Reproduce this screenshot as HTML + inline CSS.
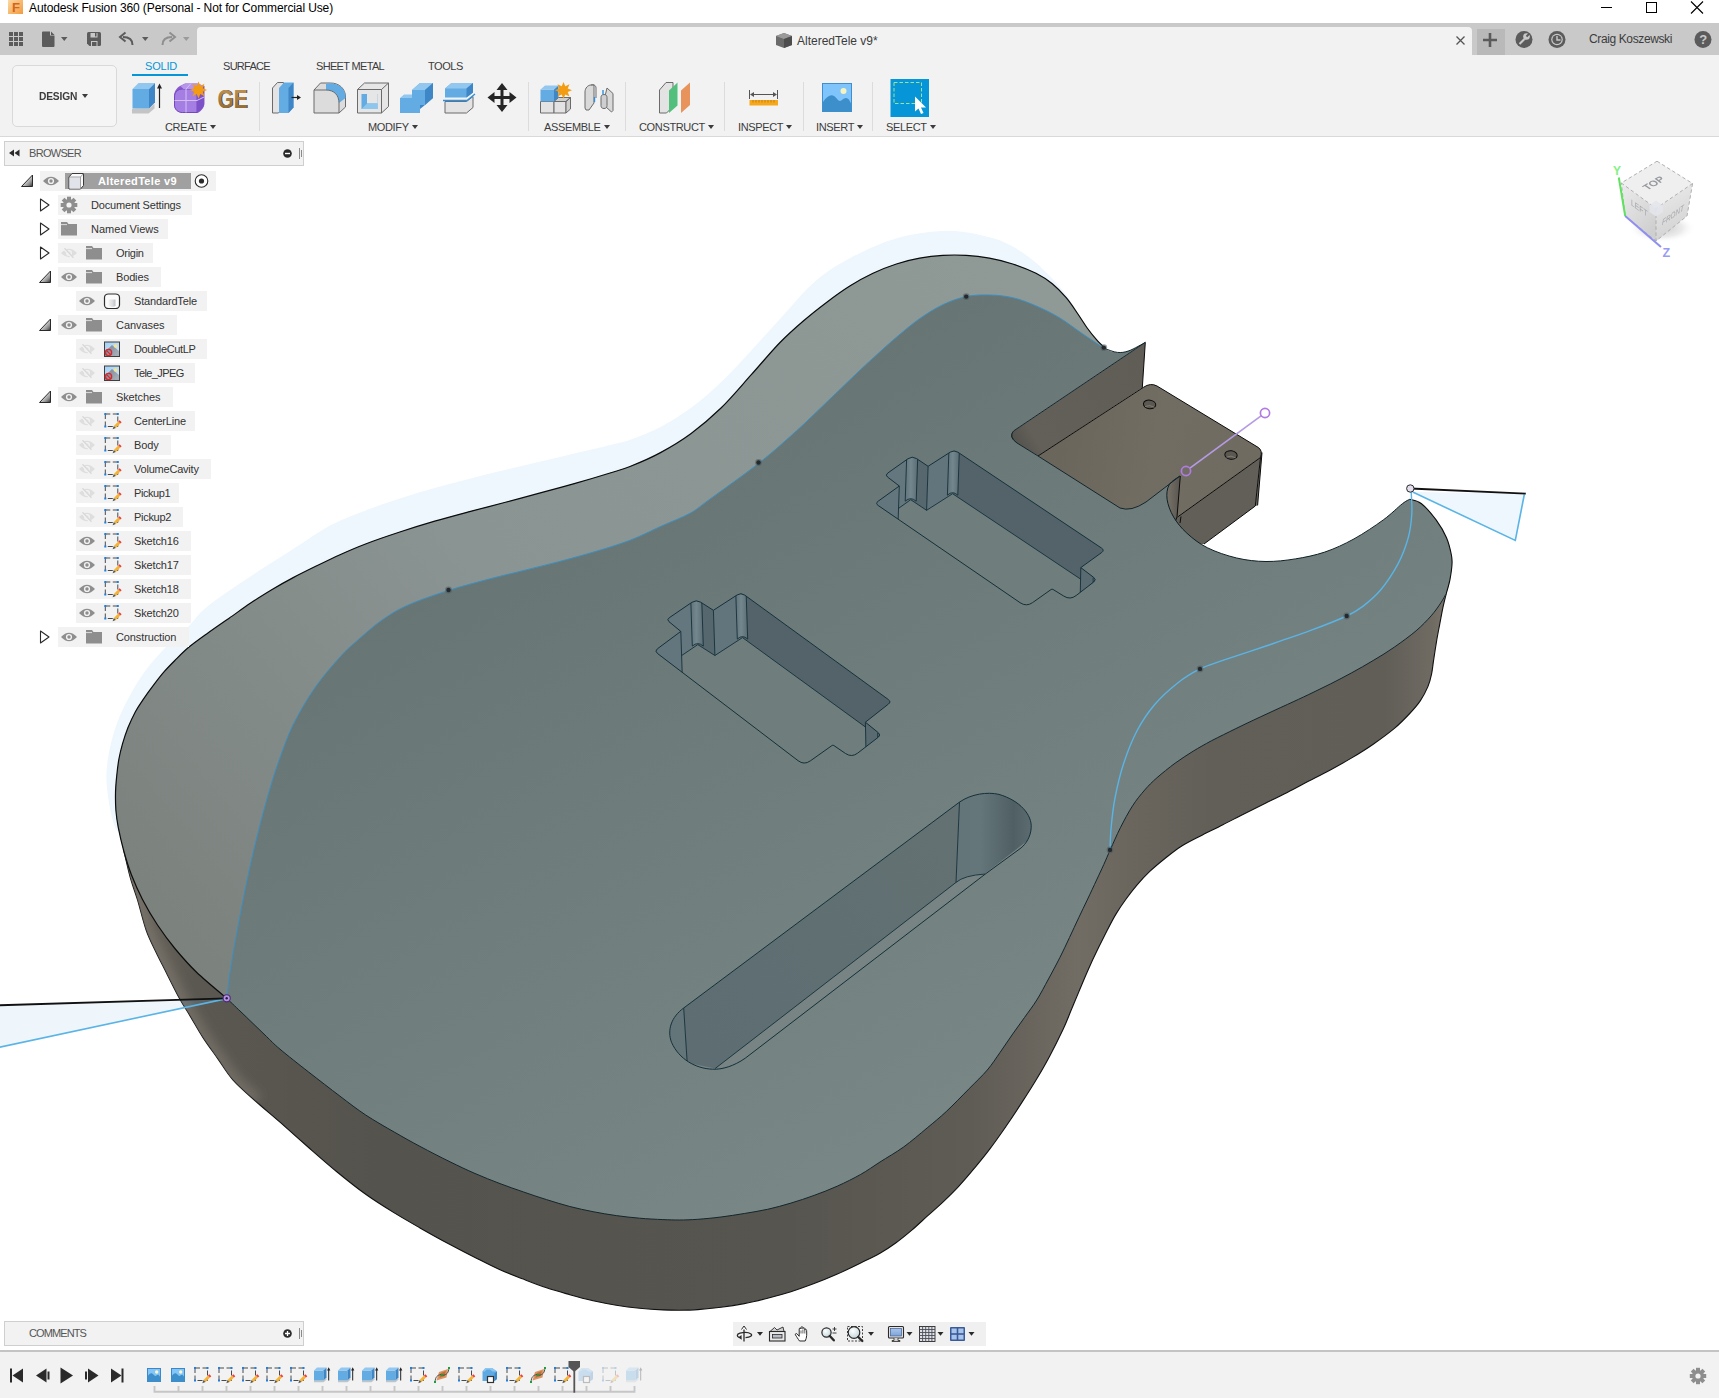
<!DOCTYPE html>
<html lang="en">
<head>
<meta charset="utf-8">
<title>Autodesk Fusion 360 (Personal - Not for Commercial Use)</title>
<style>
*{box-sizing:border-box;margin:0;padding:0}
html,body{width:1719px;height:1398px;overflow:hidden;background:#fff}
body{font-family:"Liberation Sans",Arial,sans-serif;font-size:11px;color:#3c3c3c;position:relative}
.abs{position:absolute}
#titlebar{position:absolute;left:0;top:0;width:1719px;height:23px;background:#fff}
#titlebar .ttl{position:absolute;left:29px;top:0;height:16px;line-height:16px;font-size:12px;color:#000;white-space:nowrap;letter-spacing:-0.11px}
#qat{position:absolute;left:0;top:23px;width:1719px;height:32px;background:#c9c9c9}
#doctab{position:absolute;left:197px;top:27px;width:1275px;height:28px;background:#f2f2f2;border-radius:4px 4px 0 0}
#doctab .name{position:absolute;left:600px;top:0;height:28px;line-height:28px;font-size:12px;color:#3c3c3c;white-space:nowrap}
#ribbon{position:absolute;left:0;top:55px;width:1719px;height:81px;background:#f2f2f2}
#ribbonline{position:absolute;left:0;top:136px;width:1719px;height:1px;background:#d9d9d9}
.tab{position:absolute;top:59px;height:14px;line-height:14px;font-size:11px;color:#3c3c3c;white-space:nowrap;letter-spacing:-0.1px}
.grp{position:absolute;top:121px;height:13px;line-height:13px;font-size:11px;color:#3c3c3c;white-space:nowrap;letter-spacing:-0.35px}
.grp i{display:inline-block;width:0;height:0;border-left:3px solid transparent;border-right:3px solid transparent;border-top:4px solid #3c3c3c;margin-left:3px;vertical-align:2px}
.sep{position:absolute;top:82px;width:1px;height:49px;background:#dcdcdc}
#viewport{position:absolute;left:0;top:137px;width:1719px;height:1213px;background:#fff;overflow:hidden}
.panelhdr{position:absolute;left:4px;width:300px;height:25px;background:#f2f2f2;border:1px solid #cfcfcf;font-size:11.5px;color:#555;line-height:23px;white-space:nowrap}
.row{position:absolute;height:20px;background:#f2f2f2}
.row span{position:absolute;top:0;height:20px;line-height:20px;font-size:11px;color:#333;white-space:nowrap}
#timeline{position:absolute;left:0;top:1350px;width:1719px;height:48px;background:#f2f2f2;border-top:2px solid #c4c4c4}
#navbar{position:absolute;left:733px;top:1322px;width:253px;height:24px;background:#f0f0f0}
svg{position:absolute;overflow:visible}
</style>
</head>
<body>
<div id="titlebar"><div class="ttl">Autodesk Fusion 360 (Personal - Not for Commercial Use)</div></div>
<div id="qat"></div>
<div class="abs" style="left:1477px;top:29px;width:28px;height:26px;background:#b9b9b9"></div>
<div id="doctab"><div class="name">AlteredTele v9*</div></div>
<div id="ribbon"></div>
<div id="ribbonline"></div>
<div class="abs" style="left:12px;top:65px;width:105px;height:62px;border:1px solid #d9d9d9;border-radius:5px;background:#f5f5f5"></div>
<div class="abs" style="left:39px;top:89px;height:14px;line-height:14px;font-size:11px;font-weight:bold;color:#3c3c3c;letter-spacing:-0.2px;white-space:nowrap;transform:scaleX(0.93);transform-origin:0 0">DESIGN</div>
<div class="abs" style="left:82px;top:94px;width:0;height:0;border-left:3px solid transparent;border-right:3px solid transparent;border-top:4px solid #3c3c3c"></div>
<div class="tab" style="left:145px;color:#0696d7;letter-spacing:-0.2px">SOLID</div>
<div class="abs" style="left:132px;top:74px;width:56px;height:2px;background:#0696d7"></div>
<div class="tab" style="left:223px;letter-spacing:-0.71px">SURFACE</div>
<div class="tab" style="left:316px;letter-spacing:-0.67px">SHEET METAL</div>
<div class="tab" style="left:428px;letter-spacing:-0.42px">TOOLS</div>
<div class="grp" style="left:165px">CREATE<i></i></div>
<div class="grp" style="left:368px">MODIFY<i></i></div>
<div class="grp" style="left:544px">ASSEMBLE<i></i></div>
<div class="grp" style="left:639px">CONSTRUCT<i></i></div>
<div class="grp" style="left:738px">INSPECT<i></i></div>
<div class="grp" style="left:816px">INSERT<i></i></div>
<div class="grp" style="left:886px">SELECT<i></i></div>
<div class="sep" style="left:259px"></div>
<div class="sep" style="left:528px"></div>
<div class="sep" style="left:625px"></div>
<div class="sep" style="left:724px"></div>
<div class="sep" style="left:803px"></div>
<div class="sep" style="left:872px"></div>
<div class="abs" style="left:1589px;top:32px;height:14px;line-height:14px;font-size:12px;color:#3c3c3c;white-space:nowrap;letter-spacing:-0.38px">Craig Koszewski</div>
<svg class="abs" style="left:0;top:0" width="1719" height="137" viewBox="0 0 1719 137">
<defs>
<linearGradient id="gF" x1="0" y1="0" x2="1" y2="1"><stop offset="0" stop-color="#fbd9a6"/><stop offset="1" stop-color="#f39a3c"/></linearGradient>
<linearGradient id="gGE" x1="0" y1="0" x2="0" y2="1"><stop offset="0" stop-color="#c89a58"/><stop offset="1" stop-color="#8a6330"/></linearGradient>
</defs>
<!-- app icon -->
<rect x="8" y="0" width="15" height="14" fill="url(#gF)"/>
<text x="12" y="12" font-family="Liberation Sans,sans-serif" font-weight="bold" font-size="13" fill="#d4661a">F</text>
<!-- window controls -->
<path d="M1601 7.5h11" stroke="#000" stroke-width="1"/>
<rect x="1646.5" y="2.5" width="10" height="10" fill="none" stroke="#000" stroke-width="1"/>
<path d="M1691 1.5l12 12M1703 1.5l-12 12" stroke="#000" stroke-width="1.1"/>
<!-- QAT grid -->
<g fill="#5b5b5b">
<rect x="9" y="32" width="4" height="4"/><rect x="14" y="32" width="4" height="4"/><rect x="19" y="32" width="4" height="4"/>
<rect x="9" y="37" width="4" height="4"/><rect x="14" y="37" width="4" height="4"/><rect x="19" y="37" width="4" height="4"/>
<rect x="9" y="42" width="4" height="4"/><rect x="14" y="42" width="4" height="4"/><rect x="19" y="42" width="4" height="4"/>
<!-- file -->
<path d="M42 32.5a1 1 0 0 1 1-1h7v4h4.5v10.5a1 1 0 0 1-1 1h-10.5a1 1 0 0 1-1-1z"/><path d="M51 31.5l3.5 3.5h-3.5z"/>
<path d="M61 37h6.5l-3.25 4z"/>
<!-- save -->
<path d="M87 33.5a1.5 1.5 0 0 1 1.5-1.5h11a1.5 1.5 0 0 1 1.5 1.5v11a1.5 1.5 0 0 1-1.5 1.5h-10l-2.500-2.5z"/>
</g>
<rect x="90.500" y="33" width="7" height="4.500" fill="#c9c9c9"/><rect x="91" y="41" width="6.500" height="5" fill="#c9c9c9"/><rect x="92" y="42" width="4.500" height="4" fill="#5b5b5b"/>
<rect x="95" y="33" width="1.5" height="3.500" fill="#5b5b5b"/>
<!-- undo -->
<path d="M132.500 45c0-5-3-8-9.500-8" fill="none" stroke="#5b5b5b" stroke-width="2"/><path d="M125.500 32.500l-5.500 4.500 5.500 4.500" fill="none" stroke="#5b5b5b" stroke-width="2" stroke-linejoin="miter"/>
<path d="M142 37h6.500l-3.250 4z" fill="#5b5b5b"/>
<!-- redo -->
<path d="M162.500 45c0-5 3-8 9.500-8" fill="none" stroke="#8f8f8f" stroke-width="2"/><path d="M169.500 32.500l5.500 4.500-5.500 4.500" fill="none" stroke="#8f8f8f" stroke-width="2"/>
<path d="M183 37h6.500l-3.250 4z" fill="#9a9a9a"/>
<!-- doc tab icon -->
<path d="M776 36l8-3 8 3v9l-8 3-8-3z" fill="#6b6b6b"/><path d="M776 36l8 3 8-3-8-3z" fill="#9a9a9a"/><path d="M784 39v9l8-3v-9z" fill="#4d4d4d"/>
<!-- tab close -->
<path d="M1456.500 36.500l8 8M1464.500 36.500l-8 8" stroke="#555" stroke-width="1.300"/>
<!-- plus -->
<path d="M1483 40h14M1490 33v14" stroke="#5b5b5b" stroke-width="2.600"/>
<!-- job status -->
<circle cx="1524" cy="39.500" r="8.500" fill="#5b5b5b"/><path d="M1519.500 44l5-5" stroke="#c9c9c9" stroke-width="2.200"/><circle cx="1526.500" cy="36.500" r="3.300" fill="#c9c9c9"/><path d="M1526.500 36.500l3-3" stroke="#5b5b5b" stroke-width="2"/>
<!-- clock -->
<circle cx="1557" cy="39.500" r="8.500" fill="#5b5b5b"/><circle cx="1557" cy="39.500" r="5.800" fill="#c9c9c9"/><circle cx="1557" cy="39.500" r="4.600" fill="#5b5b5b"/><path d="M1557 36v4h3.500" stroke="#c9c9c9" stroke-width="1.400" fill="none"/>
<!-- help -->
<circle cx="1703" cy="39.500" r="8.500" fill="#5b5b5b"/><text x="1699.300" y="44.300" font-family="Liberation Sans,sans-serif" font-weight="bold" font-size="13" fill="#c9c9c9">?</text>

<!-- ===== ribbon icons ===== -->
<!-- extrude -->
<path d="M132 109l16.500 0 6-5v4.500l-6 5h-16.500z" fill="#c4c4c4"/><path d="M132 109h16.500l6-5h-3l-3 2z" fill="#dedede"/>
<path d="M132.500 89h16.500v19.500h-16.500z" fill="#62abe3"/><path d="M132.500 89l6-6h16.500l-6 6z" fill="#92c8ef"/><path d="M149 89l6-6v19.500l-6 6z" fill="#3e86c6"/>
<path d="M159.500 87v21" stroke="#222" stroke-width="1.200"/><path d="M157 88.500l2.500-5 2.500 5z" fill="#222"/>
<!-- form -->
<path d="M174 96.500c0-5 2.500-8.500 6-10.500l5-2.500h12l7.500 2.500v17c0 4-3 8-7 10h-14c-5.500 0-9.500-3.500-9.500-9z" fill="#8a5ad0"/>
<path d="M174.500 97c0-5 3.500-8 8-8h14.500v23.500h-14.500c-4.500 0-8-3-8-7.500z" fill="#a57ee4" stroke="#7648c0" stroke-width="1"/>
<path d="M197 89l7-3v17.500c0 4-3 7-7 9z" fill="#7d52c8"/>
<path d="M180.500 86l5-2.500h12l6.500 2.500-7 3h-13.500z" fill="#b695ea"/>
<path d="M186 89v23.500M174.500 100.500h22.500M197 100.500l7-3.500M186 89l5-5.500" stroke="#d4bff5" stroke-width="1" fill="none"/>
<path d="M198.500 81.500l1.800 4.400 4.200-2.100-1.800 4.400 4.400 1.800-4.400 1.800 1.800 4.400-4.200-2.100-1.800 4.400-1.800-4.400-4.200 2.100 1.800-4.400-4.400-1.800 4.400-1.800-1.800-4.400 4.200 2.100z" fill="#f39c12"/>
<!-- GE -->
<text x="218.300" y="108.300" font-family="Liberation Sans,sans-serif" font-weight="bold" font-size="25" textLength="30" lengthAdjust="spacingAndGlyphs" fill="#3b3428">GE</text>
<text x="217.500" y="107.500" font-family="Liberation Sans,sans-serif" font-weight="bold" font-size="25" textLength="30" lengthAdjust="spacingAndGlyphs" fill="url(#gGE)">GE</text>
<!-- press pull -->
<path d="M272.500 88l5-5.500h6v25l-5 5.500h-6z" fill="#e3e3e3" stroke="#6b6b6b" stroke-width="1"/>
<path d="M279 88l5-5.500h9.500v25l-5 5.500h-9.500z" fill="#62abe3"/><path d="M288.500 88l5-5.500v25l-5 5.500z" fill="#3e86c6"/>
<path d="M291.500 97.500h7" stroke="#222" stroke-width="1.200"/><path d="M297 95l4 2.500-4 2.500z" fill="#222"/>
<!-- fillet -->
<path d="M314 90l6.500-7h10c9 0 15 6 15 14v10l-6.500 6h-25z" fill="#dcdcdc" stroke="#6b6b6b" stroke-width="1"/>
<path d="M326 84c6-2 13 0 17 5 2 3 2.500 6 2.500 9l-6.500 5c0-8-5-13-13-13z" fill="#62abe3"/>
<path d="M314 90h12c8 0 13 5 13 13v10" fill="none" stroke="#6b6b6b" stroke-width="1"/>
<!-- shell -->
<path d="M357.500 89.500l7-6.500h24v23.500l-7 6.500h-24z" fill="#e6e6e6" stroke="#6b6b6b" stroke-width="1"/>
<path d="M357.500 89.500h24v23.500M381.500 89.500l7-6.500" fill="none" stroke="#6b6b6b" stroke-width="1"/>
<path d="M361.500 94h16v15h-16z" fill="#62abe3"/><path d="M367 94h10.500v9.500h-10.500z" fill="#e6e6e6"/><path d="M361.500 109l5.500-5.500h10.500v5.500z" fill="#8ec6ee"/>
<!-- combine -->
<path d="M400 98h12v-8l8-7h13v15l-8 7h-5v8l-8 0h-12z" fill="#62abe3"/>
<path d="M412 90l8-7h13l-8 7z" fill="#92c8ef"/><path d="M425 90l8-7v15l-8 7z" fill="#3e86c6"/><path d="M400 98l4-3.500h8v3.500z" fill="#92c8ef"/><path d="M420 105h5l-5 4z" fill="#3e86c6"/>
<!-- offset face -->
<path d="M445 101.500h21.500l6.500-5v11l-6.500 5.500h-21.500z" fill="#e3e3e3" stroke="#6b6b6b" stroke-width="1"/>
<path d="M445 88.500l6.500-5.500h21.500v9.500l-6.500 5h-21.500z" fill="#62abe3"/><path d="M445 88.500l6.500-5.500h21.500l-6.500 5.500z" fill="#92c8ef"/><path d="M466.500 88.500l6.500-5.500v9.500l-6.500 5z" fill="#3e86c6"/>
<path d="M443 100.500h24l8-6.500" fill="none" stroke="#2f8fde" stroke-width="1.300"/>
<!-- move -->
<path d="M502 83l5.500 7h-4v6h6v-4l7 5.500-7 5.500v-4h-6v6h4l-5.500 7-5.500-7h4v-6h-6v4l-7-5.500 7-5.500v4h6v-6h-4z" fill="#262626"/>
<!-- new component -->
<path d="M540.500 101.500h13.500v11.500h-13.500z" fill="#e3e3e3" stroke="#6b6b6b" stroke-width="1"/><path d="M554 101.500h12v11.500h-12z" fill="#e3e3e3" stroke="#6b6b6b" stroke-width="1"/><path d="M554 101.500l4.500-4h12l-4.500 4zM566 101.500l4.500-4v11.500l-4.500 4z" fill="#cfcfcf" stroke="#6b6b6b" stroke-width="1"/>
<path d="M540.500 89.500h13.500v12h-13.500z" fill="#62abe3"/><path d="M540.500 89.500l4.500-4h13.500l-4.500 4z" fill="#92c8ef"/><path d="M554 89.500l4.500-4v12l-4.500 4z" fill="#3e86c6"/>
<path d="M563.500 82l1.800 4.200 4.200-2-1.800 4.300 4.300 1.800-4.300 1.800 1.800 4.300-4.200-2-1.800 4.300-1.800-4.300-4.200 2 1.800-4.300-4.300-1.800 4.300-1.800-1.800-4.300 4.200 2z" fill="#f39c12"/>
<!-- joint -->
<path d="M585 92c0-4 3-7 6-7h3v18l-5 7h-3l-1-2z" fill="#d9d9d9" stroke="#6b6b6b" stroke-width="1"/>
<path d="M591 85c2-1 5 0 5 3v10" fill="none" stroke="#6b6b6b" stroke-width="1"/>
<path d="M607 88l6 5.500v17l-1.500 1.500-6-5.500h-3z" fill="#d9d9d9" stroke="#6b6b6b" stroke-width="1"/>
<path d="M601 97.500c0-2 1-3 3-3s3 1 3 3v8c0 2-1 3-3 3s-3-1-3-3z" fill="#cfcfcf" stroke="#6b6b6b" stroke-width="1"/>
<path d="M594.500 97v5M603 90v4.500" stroke="#2f8fde" stroke-width="1.400"/>
<!-- construct -->
<path d="M659.500 90l6.500-7.500h7v24l-6.500 6.500h-7z" fill="#e3e3e3" stroke="#6b6b6b" stroke-width="1"/>
<path d="M669 90.500l8.500-8v23l-8.500 7.500z" fill="#52c07c"/>
<path d="M681 90.500l9-8v22.500l-9 8z" fill="#e7935b"/>
<!-- inspect -->
<path d="M749.500 90v9M777.500 90v9M751 94.500h25" stroke="#555" stroke-width="1"/><path d="M750 94.500l4-2.500v5zM777 94.500l-4-2.500v5z" fill="#555"/>
<rect x="749.500" y="100" width="28.500" height="5.500" fill="#f6a81c"/><path d="M753 100v2.500M756 100v2.500M759 100v2.500M762 100v2.500M765 100v2.500M768 100v2.500M771 100v2.500M774 100v2.500" stroke="#c47f0a" stroke-width="1"/>
<!-- insert -->
<rect x="822.500" y="83.500" width="29" height="28" fill="#7fc4fb" stroke="#3f8fd0" stroke-width="1"/>
<path d="M823 102c4-6 8-8 11-6s4 5 6 5 3-3 6-3 4 4 5.500 6v7.500h-28.500z" fill="#3d8fcb"/><circle cx="843.500" cy="91" r="3" fill="#f7f3c0"/>
<!-- select -->
<rect x="890.500" y="79" width="38.500" height="38" fill="#0696d7"/>
<rect x="894" y="82.500" width="27.500" height="21" fill="none" stroke="#9be39b" stroke-width="1" stroke-dasharray="3.500 2"/>
<path d="M915 96.500v15l3.500-3 2.500 5.500 2.500-1-2.500-5.500h5z" fill="#fff"/>
</svg>
<div id="viewport">
<svg style="left:0;top:-137px" width="1719" height="1398" viewBox="0 0 1719 1398">
<defs>
<linearGradient id="gTop" gradientUnits="userSpaceOnUse" x1="600" y1="300" x2="1077" y2="1179"><stop offset="0" stop-color="#637170"/><stop offset="1" stop-color="#7b8988"/></linearGradient>
<linearGradient id="gBand" gradientUnits="userSpaceOnUse" x1="1000" y1="250" x2="150" y2="950"><stop offset="0" stop-color="#8f9996"/><stop offset="0.55" stop-color="#8a9492"/><stop offset="1" stop-color="#7b817d"/></linearGradient>
<linearGradient id="gSide" gradientUnits="userSpaceOnUse" x1="115" y1="0" x2="1452" y2="0">
<stop offset="0" stop-color="#6b675f"/><stop offset="0.06" stop-color="#5b5851"/><stop offset="0.2" stop-color="#55534d"/><stop offset="0.5" stop-color="#57554f"/><stop offset="0.64" stop-color="#5f5c55"/><stop offset="0.72" stop-color="#716c64"/><stop offset="0.76" stop-color="#6a665e"/><stop offset="0.82" stop-color="#625f58"/><stop offset="0.95" stop-color="#615e57"/><stop offset="0.985" stop-color="#6f6b63"/><stop offset="1" stop-color="#7d786f"/></linearGradient>
<linearGradient id="gFloor" gradientUnits="userSpaceOnUse" x1="1060" y1="440" x2="1250" y2="470"><stop offset="0" stop-color="#6a665c"/><stop offset="0.5" stop-color="#726d63"/><stop offset="1" stop-color="#6f6b61"/></linearGradient>
<linearGradient id="gWall" gradientUnits="userSpaceOnUse" x1="1015" y1="440" x2="1145" y2="360"><stop offset="0" stop-color="#55534d"/><stop offset="0.12" stop-color="#63605a"/><stop offset="1" stop-color="#605d57"/></linearGradient>
<linearGradient id="gCut" gradientUnits="userSpaceOnUse" x1="1166" y1="0" x2="1181" y2="0"><stop offset="0" stop-color="#7a756b"/><stop offset="1" stop-color="#57544e"/></linearGradient>
<linearGradient id="gFil" x1="0" y1="0" x2="1" y2="0"><stop offset="0" stop-color="#62747b"/><stop offset="0.45" stop-color="#73878e"/><stop offset="1" stop-color="#5c6d74"/></linearGradient>
<linearGradient id="gSlotW" gradientUnits="userSpaceOnUse" x1="690" y1="1040" x2="960" y2="840"><stop offset="0" stop-color="#5d6d72"/><stop offset="1" stop-color="#637172"/></linearGradient>
<linearGradient id="gSlotR" gradientUnits="userSpaceOnUse" x1="958" y1="0" x2="1032" y2="0"><stop offset="0" stop-color="#64757a"/><stop offset="0.3" stop-color="#65767a"/><stop offset="0.75" stop-color="#4f5f64"/><stop offset="1" stop-color="#5d6c70"/></linearGradient>
<radialGradient id="gCubeSh"><stop offset="0" stop-color="#9a9a9a" stop-opacity="0.55"/><stop offset="0.6" stop-color="#bdbdbd" stop-opacity="0.3"/><stop offset="1" stop-color="#ffffff" stop-opacity="0"/></radialGradient>
<linearGradient id="gCubeL" x1="0" y1="0" x2="0.6" y2="1"><stop offset="0" stop-color="#ececec"/><stop offset="1" stop-color="#cfcfcf"/></linearGradient>
<linearGradient id="gCubeR" x1="0" y1="0" x2="0.3" y2="1"><stop offset="0" stop-color="#ededed"/><stop offset="1" stop-color="#d2d2d2"/></linearGradient>
<filter id="fBlur" x="-20%" y="-20%" width="140%" height="140%"><feGaussianBlur stdDeviation="5"/></filter>
</defs>
<path d="M1096 340C1093.8 336.8 1086.3 326.9 1082.5 321C1078.7 315.1 1076.9 310.5 1073 304.7C1069.1 298.9 1065.2 293 1059 286C1052.8 279 1043.7 269.4 1036 262.8C1028.3 256.2 1020.5 250.8 1012.7 246.5C1004.9 242.2 1000.3 239.8 989.4 237.2C978.5 234.6 963.1 230.5 947.5 230.7C931.9 230.9 912.3 233.8 896 238.4C879.7 243 863.3 251 849.8 258.2C836.3 265.4 826.4 271.6 815 281.4C803.6 291.2 792.1 305.7 781.5 317.2C770.9 328.7 761.4 339.6 751.3 350.5C741.2 361.4 731.1 372.7 721 382.3C710.9 391.9 700.9 400.6 690.8 408C680.7 415.4 670.6 421.6 660.5 426.9C650.4 432.2 638.8 436.6 630.3 439.7C621.8 442.8 618.5 442.9 609.2 445.2C599.9 447.5 585.9 450.8 574.3 453.6C562.7 456.4 551 459.1 539.4 461.8C527.8 464.5 516.1 467.2 504.5 470C492.9 472.8 481.2 475.7 469.6 478.7C458 481.7 446.3 484.7 434.7 488C423.1 491.3 411.4 494.7 399.8 498.5C388.2 502.3 376.5 506.2 364.9 510.7C353.3 515.2 341.9 519.1 330 525.5C318.1 531.9 306.5 540.5 293.2 549C279.9 557.5 264.6 566.9 250.3 576.5C236 586.1 217.5 598.4 207.3 606.6C197.1 614.8 196.2 618.9 189.1 625.9C181.9 632.9 172.1 640.3 164.4 648.4C156.7 656.5 149.3 665.1 142.9 674.2C136.5 683.3 130.4 694.1 125.8 703.2C121.1 712.3 117.9 720.3 115 728.9C112.1 737.5 110 746.8 108.6 754.7C107.2 762.6 106.5 769 106.4 776.1C106.3 783.2 107.3 790.8 108.2 797.6C109.1 804.4 110.5 811.5 111.8 816.9C113.1 822.3 115.4 827.6 116.1 829.8L170 880L300 700L700 500L1000 330Z" fill="#eef7fd"/>
<path d="M226.700 998.300L-2 1005.300L-2 1047.500Z" fill="#eef6fc"/>
<path d="M123.5 849C124.6 853.6 127.7 868.1 130 876.6C132.3 885.1 134.9 891.2 137.6 900.2C140.3 909.2 143.2 921.7 146.2 930.3C149.2 938.9 152.4 944.6 155.8 951.7C159.2 958.9 162.7 965.4 166.6 973.2C170.5 981 175.5 991.1 179.4 998.3C183.3 1005.4 186.3 1009.6 190.2 1016.1C194.1 1022.6 198.3 1030.4 203 1037.6C207.7 1044.8 213.1 1052 218.1 1059.1C223.1 1066.2 226.8 1073 233.1 1080.1C239.4 1087.2 248.2 1094.5 256 1101.5C263.8 1108.5 271.2 1114.5 280 1122.2C288.8 1129.9 299.1 1139.2 308.6 1147.5C318.1 1155.8 327.6 1164.2 337.1 1172C346.6 1179.8 356.2 1187.5 365.7 1194.3C375.2 1201.1 385.2 1207.3 394.3 1212.9C403.4 1218.5 410.7 1222.6 420 1227.9C429.3 1233.2 440.8 1239.6 450 1244.5C459.2 1249.4 466.7 1253.3 475 1257.5C483.3 1261.7 491.9 1266.2 500 1269.8C508.1 1273.4 515.5 1276.1 523.3 1279.1C531 1282.1 538.8 1285.2 546.5 1287.8C554.2 1290.4 562 1292.5 569.8 1294.7C577.6 1296.9 585.4 1299 593.1 1300.8C600.9 1302.5 608.5 1304 616.3 1305.2C624 1306.4 631.8 1307.4 639.6 1308.2C647.4 1309 656.3 1309.6 662.9 1309.9C669.5 1310.2 673.4 1310.3 679.2 1310.3C685 1310.2 690.8 1310.1 697.8 1309.6C704.8 1309.1 713.2 1308.3 721 1307.3C728.8 1306.3 736.5 1305.1 744.3 1303.6C752.1 1302.1 759.8 1300.2 767.6 1298.2C775.4 1296.2 783.1 1294.1 790.9 1291.7C798.6 1289.3 806.4 1286.5 814.1 1283.6C821.9 1280.6 829.6 1277.4 837.4 1274C845.2 1270.6 853.6 1266.5 860.7 1263C867.8 1259.5 874.2 1256.5 880 1253.2C885.8 1249.9 890.5 1246.8 895.7 1243C901 1239.2 906.2 1234.9 911.5 1230.4C916.8 1225.9 922 1220.9 927.2 1216.2C932.4 1211.5 937.6 1207.1 942.9 1202.1C948.1 1197.1 953.5 1191.9 958.7 1186.3C964 1180.7 969.2 1174.5 974.4 1168.2C979.6 1161.9 984.9 1155.5 990.1 1148.6C995.4 1141.6 1000.6 1134.1 1005.9 1126.5C1011.1 1118.9 1016.4 1111 1021.6 1102.9C1026.9 1094.8 1032.7 1085.7 1037.4 1077.8C1042.1 1069.9 1045.7 1063.7 1049.9 1055.7C1054.2 1047.7 1059.4 1037.2 1062.9 1029.8C1066.4 1022.3 1068.2 1017.3 1070.8 1011C1073.4 1004.7 1075.8 998.9 1078.7 992.1C1081.6 985.3 1084.9 977.1 1088.1 970C1091.2 962.9 1094.4 956.1 1097.6 949.6C1100.8 943.1 1103.9 936.7 1107 930.7C1110.1 924.7 1113.2 918.6 1116.4 913.4C1119.6 908.1 1122.5 903.9 1125.9 899.2C1129.3 894.5 1133 889.7 1136.9 885.1C1140.8 880.5 1144.8 876.2 1149.5 871.7C1154.2 867.2 1160 862.5 1165.2 858.3C1170.5 854.1 1175.2 850.2 1181 846.5C1186.8 842.8 1193 839.8 1200 836.2C1207 832.6 1215.5 828.5 1222.9 824.7C1230.3 821 1237.2 817.3 1244.4 813.7C1251.6 810.1 1258.8 806.5 1265.9 803C1273.1 799.5 1280.2 796.1 1287.3 792.5C1294.4 788.9 1301.6 784.9 1308.8 781.1C1316 777.4 1323.1 773.9 1330.3 770C1337.5 766.1 1344.5 762.2 1351.7 757.9C1358.9 753.6 1366 749.2 1373.2 744.2C1380.4 739.2 1388.6 733.2 1394.7 728.1C1400.8 723 1405.4 718.1 1409.7 713.5C1414 708.9 1417.4 705.1 1420.4 700.6C1423.4 696.1 1426 691.1 1427.9 686.6C1429.8 682.1 1430.7 678.1 1431.6 673.8C1432.5 669.5 1432.7 666.3 1433.5 660.9C1434.3 655.5 1435.5 647.7 1436.5 641.6C1437.5 635.5 1438.6 630.1 1439.7 624.4C1440.8 618.7 1441.9 612.4 1443 607.2C1444.1 602 1445.8 595.5 1446.4 593.2L1380 600L1100 800L700 1150L300 1000L150 850Z" fill="url(#gSide)" stroke="#111" stroke-width="1.1" stroke-linejoin="round"/>
<clipPath id="cSide"><path d="M123.5 849C124.6 853.6 127.7 868.1 130 876.6C132.3 885.1 134.9 891.2 137.6 900.2C140.3 909.2 143.2 921.7 146.2 930.3C149.2 938.9 152.4 944.6 155.8 951.7C159.2 958.9 162.7 965.4 166.6 973.2C170.5 981 175.5 991.1 179.4 998.3C183.3 1005.4 186.3 1009.6 190.2 1016.1C194.1 1022.6 198.3 1030.4 203 1037.6C207.7 1044.8 213.1 1052 218.1 1059.1C223.1 1066.2 226.8 1073 233.1 1080.1C239.4 1087.2 248.2 1094.5 256 1101.5C263.8 1108.5 271.2 1114.5 280 1122.2C288.8 1129.9 299.1 1139.2 308.6 1147.5C318.1 1155.8 327.6 1164.2 337.1 1172C346.6 1179.8 356.2 1187.5 365.7 1194.3C375.2 1201.1 385.2 1207.3 394.3 1212.9C403.4 1218.5 410.7 1222.6 420 1227.9C429.3 1233.2 440.8 1239.6 450 1244.5C459.2 1249.4 466.7 1253.3 475 1257.5C483.3 1261.7 491.9 1266.2 500 1269.8C508.1 1273.4 515.5 1276.1 523.3 1279.1C531 1282.1 538.8 1285.2 546.5 1287.8C554.2 1290.4 562 1292.5 569.8 1294.7C577.6 1296.9 585.4 1299 593.1 1300.8C600.9 1302.5 608.5 1304 616.3 1305.2C624 1306.4 631.8 1307.4 639.6 1308.2C647.4 1309 656.3 1309.6 662.9 1309.9C669.5 1310.2 673.4 1310.3 679.2 1310.3C685 1310.2 690.8 1310.1 697.8 1309.6C704.8 1309.1 713.2 1308.3 721 1307.3C728.8 1306.3 736.5 1305.1 744.3 1303.6C752.1 1302.1 759.8 1300.2 767.6 1298.2C775.4 1296.2 783.1 1294.1 790.9 1291.7C798.6 1289.3 806.4 1286.5 814.1 1283.6C821.9 1280.6 829.6 1277.4 837.4 1274C845.2 1270.6 853.6 1266.5 860.7 1263C867.8 1259.5 874.2 1256.5 880 1253.2C885.8 1249.9 890.5 1246.8 895.7 1243C901 1239.2 906.2 1234.9 911.5 1230.4C916.8 1225.9 922 1220.9 927.2 1216.2C932.4 1211.5 937.6 1207.1 942.9 1202.1C948.1 1197.1 953.5 1191.9 958.7 1186.3C964 1180.7 969.2 1174.5 974.4 1168.2C979.6 1161.9 984.9 1155.5 990.1 1148.6C995.4 1141.6 1000.6 1134.1 1005.9 1126.5C1011.1 1118.9 1016.4 1111 1021.6 1102.9C1026.9 1094.8 1032.7 1085.7 1037.4 1077.8C1042.1 1069.9 1045.7 1063.7 1049.9 1055.7C1054.2 1047.7 1059.4 1037.2 1062.9 1029.8C1066.4 1022.3 1068.2 1017.3 1070.8 1011C1073.4 1004.7 1075.8 998.9 1078.7 992.1C1081.6 985.3 1084.9 977.1 1088.1 970C1091.2 962.9 1094.4 956.1 1097.6 949.6C1100.8 943.1 1103.9 936.7 1107 930.7C1110.1 924.7 1113.2 918.6 1116.4 913.4C1119.6 908.1 1122.5 903.9 1125.9 899.2C1129.3 894.5 1133 889.7 1136.9 885.1C1140.8 880.5 1144.8 876.2 1149.5 871.7C1154.2 867.2 1160 862.5 1165.2 858.3C1170.5 854.1 1175.2 850.2 1181 846.5C1186.8 842.8 1193 839.8 1200 836.2C1207 832.6 1215.5 828.5 1222.9 824.7C1230.3 821 1237.2 817.3 1244.4 813.7C1251.6 810.1 1258.8 806.5 1265.9 803C1273.1 799.5 1280.2 796.1 1287.3 792.5C1294.4 788.9 1301.6 784.9 1308.8 781.1C1316 777.4 1323.1 773.9 1330.3 770C1337.5 766.1 1344.5 762.2 1351.7 757.9C1358.9 753.6 1366 749.2 1373.2 744.2C1380.4 739.2 1388.6 733.2 1394.7 728.1C1400.8 723 1405.4 718.1 1409.7 713.5C1414 708.9 1417.4 705.1 1420.4 700.6C1423.4 696.1 1426 691.1 1427.9 686.6C1429.8 682.1 1430.7 678.1 1431.6 673.8C1432.5 669.5 1432.7 666.3 1433.5 660.9C1434.3 655.5 1435.5 647.7 1436.5 641.6C1437.5 635.5 1438.6 630.1 1439.7 624.4C1440.8 618.7 1441.9 612.4 1443 607.2C1444.1 602 1445.8 595.5 1446.4 593.2L1380 600L1100 800L700 1150L300 1000L150 850Z"/></clipPath>
<g clip-path="url(#cSide)"><path d="M123.5 849C124.6 853.6 127.7 868.1 130 876.6C132.3 885.1 134.9 891.2 137.6 900.2C140.3 909.2 143.2 921.7 146.2 930.3C149.2 938.9 152.4 944.6 155.8 951.7C159.2 958.9 162.7 965.4 166.6 973.2C170.5 981 175.5 991.1 179.4 998.3C183.3 1005.4 186.3 1009.6 190.2 1016.1C194.1 1022.6 198.3 1030.4 203 1037.6C207.7 1044.8 213.1 1052 218.1 1059.1C223.1 1066.2 226.8 1073 233.1 1080.1C239.4 1087.2 252.2 1097.9 256 1101.5" fill="none" stroke="#85807680" stroke-width="16" filter="url(#fBlur)"/><path d="M226.700 998.300L150 1000.700L150 1015Z" fill="#5ab4e6" opacity="0.13"/></g>
<path d="M1038 456L1143.5 387.3Q1150.5 382.5 1157 386L1258 447.3Q1263 450.5 1260.5 457.5L1177 517L1150 520L1100 510Z" fill="url(#gFloor)"/>
<path d="M1145.3 342.4L1012.5 431.5Q1008 437 1017 443.5L1038 456L1142.3 387.8Z" fill="url(#gWall)"/>
<path d="M1012.8 431.6Q1009.5 436.5 1016.5 442.6L1016.8 446.5" fill="none" stroke="#2b2b28" stroke-width="0.8"/>
<path d="M1177 517L1260.5 457.5L1255.3 506L1204 544L1185 546L1165 527Z" fill="#625f58"/>
<path d="M1260.5 457.5L1262 452L1257.6 505.5L1255.3 506Z" fill="#6d6961"/>
<path d="M1180.3 476L1169.2 484.700L1163 492L1161 526L1175 522L1177 517Z" fill="url(#gCut)"/>
<path d="M1145.3 342.4L1142.3 387.8M1038 456L1143.5 387.3Q1150.500 382.5 1157 386L1258 447.3Q1263 450.5 1260.5 457.5L1177.500 517M1260.500 457.5L1255.3 506L1204 544M1262 452.500L1257.6 505.3M1180.3 476L1177 517L1175 522M1181 516.500L1180 523" fill="none" stroke="#0b0b0b" stroke-width="1"/>
<ellipse cx="1149.6" cy="404.4" rx="6.2" ry="4.3" transform="rotate(8 1149.6 404.4)" fill="#5b5851" stroke="#0b0b0b" stroke-width="1"/>
<path d="M1145 406.6q4.500 -2.500 9.500 0.800" fill="none" stroke="#8a857a" stroke-width="0.8"/>
<ellipse cx="1231" cy="455" rx="6.2" ry="4.3" transform="rotate(8 1231 455)" fill="#5b5851" stroke="#0b0b0b" stroke-width="1"/>
<path d="M1226.4 457.2q4.500 -2.500 9.500 0.800" fill="none" stroke="#8a857a" stroke-width="0.8"/>
<path d="M1145.3 342.4C1142.6 343.8 1133.7 349.1 1129 350.8C1124.3 352.5 1121.3 352.7 1117.4 352.4C1113.5 352.1 1109.3 351 1105.8 348.9C1102.3 346.8 1099.6 343.1 1096.5 339.6C1093.4 336.1 1090.3 332.3 1087.2 328C1084.1 323.7 1081.4 319.1 1077.9 314C1074.4 308.9 1070.5 302.7 1066.2 297.7C1061.9 292.7 1057.3 287.9 1052.3 283.8C1047.3 279.7 1042.6 276.6 1036 273.3C1029.4 270 1020.5 266.5 1012.7 264C1004.9 261.5 997.1 259.6 989.4 258.2C981.6 256.8 974 255.9 966.2 255.4C958.5 254.9 950.7 254.9 942.9 255.4C935.1 255.9 927.4 256.8 919.6 258.2C911.9 259.6 904.2 261.5 896.4 264C888.6 266.5 880.8 269.6 873 273.3C865.2 277 857.5 281.1 849.8 286C842 290.9 834.2 296.6 826.5 302.4C818.8 308.2 811 314.3 803.3 321C795.5 327.7 788.7 333.6 780 342.5C771.3 351.4 761.1 363.8 751.3 374.7C741.5 385.6 731.1 398.2 721 408C710.9 417.8 700.9 426.3 690.8 433.7C680.7 441.1 670.6 447.1 660.5 452.6C650.4 458.1 638.5 463.1 630 466.5C621.5 469.9 618.5 470.3 609.2 473.2C599.9 476.1 585.9 480.3 574.3 483.6C562.7 486.9 551 490.1 539.4 493.2C527.8 496.3 516.1 499.4 504.5 502.5C492.9 505.6 481.2 508.5 469.6 511.6C458 514.7 446.3 517.8 434.7 521.2C423.1 524.6 411.4 528.2 399.8 532C388.2 535.8 374.9 540.4 364.9 544.2C354.9 548 348.4 550.9 340 554.7C331.6 558.5 322.5 563 314.7 566.8C306.9 570.6 300.4 573.8 293.2 577.6C286 581.4 278.8 585.5 271.7 589.8C264.6 594.1 257.4 598.5 250.3 603.3C243.2 608.1 236 613.4 228.8 618.4C221.6 623.4 214 628.6 207.3 633.4C200.6 638.2 194.1 642.8 188.7 647.3C183.3 651.8 179.1 656.2 175.1 660.2C171.1 664.2 168 667.3 164.4 671.4C160.8 675.5 157.3 680.1 153.7 684.9C150.1 689.6 145.9 695.4 142.9 699.9C139.9 704.4 137.9 707.1 135.4 711.7C132.9 716.4 130.1 722.4 127.9 727.8C125.8 733.2 124 738.7 122.5 743.9C121 749.1 119.9 753.6 118.9 759C117.9 764.4 117.3 770.4 116.7 776.1C116.1 781.8 115.6 787.6 115.5 793.3C115.4 799 115.5 804.9 115.9 810.5C116.4 816.1 116.9 820.6 118.2 827.2C119.5 833.8 121.3 842 123.5 850C125.7 858 128.3 866.8 131.5 875C134.7 883.2 138.2 891.2 142.5 899.5C146.8 907.8 152 916.8 157.5 925C163 933.2 168.8 941.1 175.3 949C181.9 956.9 188.2 964.3 196.8 972.5C205.4 980.7 221.7 994 226.7 998.3C228.9 1000.4 235.6 1006.8 240 1011C244.4 1015.2 248.6 1019.2 253 1023.5C257.4 1027.8 262 1032.2 266.5 1036.5C271 1040.8 273 1043.3 280 1049.2C287 1055.1 298.6 1064.2 308.6 1072C318.6 1079.8 330.5 1089 340 1096.2C349.5 1103.4 356.6 1109 365.7 1115C374.8 1121 385.2 1126.9 394.3 1132.1C403.4 1137.3 410.7 1141.5 420 1146.4C429.3 1151.4 440.8 1157.3 450 1161.8C459.2 1166.3 466.7 1169.9 475 1173.5C483.3 1177.1 491.9 1180.5 500 1183.6C508.1 1186.7 515.5 1189.2 523.3 1191.9C531 1194.6 538.8 1197.2 546.5 1199.6C554.2 1202 562 1204.5 569.8 1206.5C577.6 1208.5 585.4 1210.2 593.1 1211.7C600.9 1213.2 608.5 1214.5 616.3 1215.6C624 1216.7 631.8 1217.5 639.6 1218.2C647.4 1218.9 656.3 1219.3 662.9 1219.6C669.5 1219.9 673.4 1220 679.2 1220C685 1220 690.8 1219.8 697.8 1219.3C704.8 1218.8 713.2 1218 721 1217C728.8 1216 736.5 1214.8 744.3 1213.5C752.1 1212.2 759.8 1211 767.6 1209.3C775.4 1207.6 783.1 1205.4 790.9 1203.1C798.6 1200.8 806.4 1198.2 814.1 1195.4C821.9 1192.6 829.6 1189.6 837.4 1186.1C845.2 1182.6 853.6 1178.4 860.7 1174.4C867.8 1170.4 872.9 1166.6 880 1162C887.1 1157.4 895.7 1152.7 903.6 1147C911.5 1141.3 920.1 1133.8 927.2 1127.9C934.3 1122 939.3 1118 946.3 1111.5C953.3 1105 962.4 1095.5 969.2 1088.6C976 1081.7 982.2 1076 987.3 1070C992.4 1064 995.9 1058.3 1000 1052.5C1004.1 1046.7 1007.9 1040.8 1012 1035C1016.1 1029.2 1020.4 1023.3 1024.5 1017.5C1028.6 1011.7 1032.8 1006.4 1036.8 1000C1040.8 993.6 1044.6 986.1 1048.5 979C1052.4 971.9 1056.5 964.2 1060 957.3C1063.5 950.4 1066.4 944.1 1069.5 937.5C1072.6 930.9 1075.7 924.2 1078.7 917.8C1081.7 911.4 1084.7 905.3 1087.7 899C1090.7 892.7 1093.9 885.8 1096.6 880C1099.3 874.2 1101.5 869.6 1103.8 864.5C1106.1 859.4 1107.6 855.6 1110.4 849.5C1113.2 843.4 1116.7 835 1120.4 827.7C1124.1 820.4 1128.5 812.1 1132.6 805.8C1136.6 799.5 1140.7 794.7 1144.7 790C1148.8 785.3 1151.8 782.3 1156.9 777.8C1162 773.3 1169 767.7 1175.1 763.2C1181.2 758.8 1187.2 754.9 1193.3 751.1C1199.4 747.4 1204.5 744.5 1211.6 740.7C1218.7 737 1227.8 732.6 1235.9 728.6C1244 724.6 1251.6 721 1260.2 717C1268.8 713 1279.2 708.2 1287.3 704.5C1295.4 700.8 1301.6 697.9 1308.8 694.5C1316 691.1 1323.1 687.6 1330.3 684C1337.5 680.4 1344.5 676.7 1351.7 672.8C1358.9 668.9 1366 664.8 1373.2 660.5C1380.4 656.2 1387.6 651.9 1394.7 646.9C1401.8 641.9 1410 636 1416.1 630.8C1422.2 625.6 1427.1 620.4 1431.2 615.8C1435.3 611.1 1438.3 606.7 1440.8 602.9C1443.3 599.1 1444.9 597.1 1446.4 593.2C1447.9 589.3 1449.1 584.1 1450 579.3C1450.9 574.5 1451.8 568.3 1452 564.3C1452.2 560.2 1452.3 559.5 1451.4 555C1450.5 550.5 1449 543.4 1446.4 537.5C1443.9 531.6 1440.2 525.5 1436.1 519.9C1431.9 514.3 1425.9 507.1 1421.5 503.7C1417.1 500.3 1411.7 500 1409.7 499.3C1408.5 500 1406.8 500.3 1402.4 503.7C1398 507.1 1391.4 514 1383.3 519.9C1375.2 525.8 1363.8 533.5 1354 538.9C1344.2 544.3 1334.5 548.8 1324.7 552.1C1314.9 555.4 1305.1 557.3 1295.3 558.9C1285.5 560.5 1275.8 561.6 1266 561.5C1256.2 561.4 1246.5 560.3 1236.7 558C1226.9 555.7 1215.6 551.9 1207.3 547.7C1199 543.6 1192.4 538.2 1186.8 533.1C1181.2 528 1176.9 522.6 1173.6 517C1170.3 511.4 1167.8 504.7 1167.1 499.3C1166.4 493.9 1167 488.6 1169.2 484.7C1171.4 480.8 1178.2 477.4 1180 476L1146 502 Q1131 512 1120 508 L1038 456 L1017 443 Q1008 437 1013.5 431 Z" fill="url(#gTop)"/>
<path d="M1105.8 348.9C1104.2 347.3 1099.6 343.1 1096.5 339.6C1093.4 336.1 1090.3 332.3 1087.2 328C1084.1 323.7 1081.4 319.1 1077.9 314C1074.4 308.9 1070.5 302.7 1066.2 297.7C1061.9 292.7 1057.3 287.9 1052.3 283.8C1047.3 279.7 1042.6 276.6 1036 273.3C1029.4 270 1020.5 266.5 1012.7 264C1004.9 261.5 997.1 259.6 989.4 258.2C981.6 256.8 974 255.9 966.2 255.4C958.5 254.9 950.7 254.9 942.9 255.4C935.1 255.9 927.4 256.8 919.6 258.2C911.9 259.6 904.2 261.5 896.4 264C888.6 266.5 880.8 269.6 873 273.3C865.2 277 857.5 281.1 849.8 286C842 290.9 834.2 296.6 826.5 302.4C818.8 308.2 811 314.3 803.3 321C795.5 327.7 788.7 333.6 780 342.5C771.3 351.4 761.1 363.8 751.3 374.7C741.5 385.6 731.1 398.2 721 408C710.9 417.8 700.9 426.3 690.8 433.7C680.7 441.1 670.6 447.1 660.5 452.6C650.4 458.1 638.5 463.1 630 466.5C621.5 469.9 618.5 470.3 609.2 473.2C599.9 476.1 585.9 480.3 574.3 483.6C562.7 486.9 551 490.1 539.4 493.2C527.8 496.3 516.1 499.4 504.5 502.5C492.9 505.6 481.2 508.5 469.6 511.6C458 514.7 446.3 517.8 434.7 521.2C423.1 524.6 411.4 528.2 399.8 532C388.2 535.8 374.9 540.4 364.9 544.2C354.9 548 348.4 550.9 340 554.7C331.6 558.5 322.5 563 314.7 566.8C306.9 570.6 300.4 573.8 293.2 577.6C286 581.4 278.8 585.5 271.7 589.8C264.6 594.1 257.4 598.5 250.3 603.3C243.2 608.1 236 613.4 228.8 618.4C221.6 623.4 214 628.6 207.3 633.4C200.6 638.2 194.1 642.8 188.7 647.3C183.3 651.8 179.1 656.2 175.1 660.2C171.1 664.2 168 667.3 164.4 671.4C160.8 675.5 157.3 680.1 153.7 684.9C150.1 689.6 145.9 695.4 142.9 699.9C139.9 704.4 137.9 707.1 135.4 711.7C132.9 716.4 130.1 722.4 127.9 727.8C125.8 733.2 124 738.7 122.5 743.9C121 749.1 119.9 753.6 118.9 759C117.9 764.4 117.3 770.4 116.7 776.1C116.1 781.8 115.6 787.6 115.5 793.3C115.4 799 115.5 804.9 115.9 810.5C116.4 816.1 116.9 820.6 118.2 827.2C119.5 833.8 121.3 842 123.5 850C125.7 858 128.3 866.8 131.5 875C134.7 883.2 138.2 891.2 142.5 899.5C146.8 907.8 152 916.8 157.5 925C163 933.2 168.8 941.1 175.3 949C181.9 956.9 188.2 964.3 196.8 972.5C205.4 980.7 221.7 994 226.7 998.3C227.4 994.1 228.5 982.8 229.9 973.2C231.3 963.7 233.3 952.1 235.3 941C237.3 929.9 239.4 918.5 241.7 906.7C244 894.9 246.7 881.7 249.2 870.2C251.7 858.8 254.1 848.4 256.7 838C259.2 827.6 262.1 816.7 264.5 807.9C266.9 799.1 268.5 793.1 271 785C273.5 776.9 275.8 769.1 279.5 759C283.2 748.9 287.3 736.4 293.2 724.6C299.1 712.8 306.9 699.4 314.7 688.1C322.5 676.8 332.8 665 340 657C347.2 649 350.8 646.2 357.9 640C365 633.8 374 625.6 382.4 619.8C390.8 613.9 397.4 609.8 408.5 604.9C419.6 600 435.6 594.6 448.7 590.4C461.8 586.2 474.9 582.9 487.1 579.6C499.3 576.4 510.4 573.8 522 570.9C533.6 568 545.3 565.2 556.9 562.2C568.5 559.2 579.6 556.2 591.8 552.6C604 549 618.3 544.8 630 540.3C641.7 535.8 652.1 530.3 662.1 525.8C672.1 521.3 682.2 517.6 690 513.3C697.8 509 697.4 508.2 708.9 499.9C720.4 491.5 744.2 474.7 758.8 463.2C773.4 451.7 785.2 440.9 796.6 430.7C808 420.5 816.3 412 826.9 401.9C837.5 391.8 852.3 377.5 860 370.2C867.7 362.9 866.9 363.7 873 358.2C879.1 352.7 888.6 343.9 896.4 337.3C904.2 330.7 911.9 324.1 919.6 318.7C927.4 313.3 935.1 308.4 942.9 304.7C950.7 301 958.5 298.2 966.2 296.6C974 295 981.6 294.8 989.4 295C997.1 295.2 1004.9 295.9 1012.7 297.7C1020.5 299.5 1028.3 302.6 1036 305.9C1043.7 309.2 1051.2 312.9 1059 317.5C1066.8 322.1 1075.1 328.8 1082.5 333.8C1089.9 338.9 1099.5 345.3 1103.4 347.8C1107.3 350.3 1105.4 348.7 1105.8 348.9Z" fill="url(#gBand)"/>
<clipPath id="cpk2"><path d="M950.3 452.1Q954.1 449.7 957.9 452.2L1101.6 548.1Q1104.7 550.2 1101.7 552.5L1080.8 567.6L1093.7 577.4Q1096.7 579.7 1093.7 582L1076.2 595.5Q1070.2 600.2 1063.8 596.1L1053.1 589.5Q1052.1 588.8 1051.1 589.5L1032.6 602.6Q1026.4 607 1020.1 602.7L878.2 505.5Q875.1 503.4 878.2 501.2L899.3 486L887.6 477.1Q885 475.1 887.7 473.1L907.9 458.8Q912.2 455.7 916.6 458.6L928.1 466.3Z"/></clipPath>
<g clip-path="url(#cpk2)" stroke-linejoin="round">
<rect x="873.1" y="447.7" width="233.6" height="161.3" fill="#6f7d7c"/>
<polygon points="885,475.1 912.2,455.7 910.7,499.7 883.5,519.1" fill="#65777e"/>
<path d="M883.5 519.1L910.7 499.7" stroke="#14303a" stroke-width="0.9"/>
<polygon points="912.2,455.7 928.1,466.3 926.6,510.3 910.7,499.7" fill="#57676e"/>
<path d="M910.7 499.7L926.6 510.3" stroke="#14303a" stroke-width="0.9"/>
<polygon points="928.1,466.3 954.1,449.7 952.6,493.7 926.6,510.3" fill="#63757c"/>
<path d="M926.6 510.3L952.6 493.7" stroke="#14303a" stroke-width="0.9"/>
<polygon points="954.1,449.7 1104.7,550.2 1103.2,594.2 952.6,493.7" fill="#54636a"/>
<path d="M952.6 493.7L1103.2 594.2" stroke="#14303a" stroke-width="0.9"/>
<polygon points="906.7,457.2 917.7,458.2 916.2,501.2 910.7,498.7 905.2,501.2" fill="url(#gFil)"/>
<path d="M906.7 457.2L905.2 501.2M917.7 458.2L916.2 501.2M905.2 501.2Q910.7 496.2 916.2 501.2" fill="none" stroke="#14303a" stroke-width="0.9"/>
<polygon points="948.9,451.2 959.3,452.2 957.8,495.2 952.6,492.7 947.4,495.2" fill="url(#gFil)"/>
<path d="M948.9 451.2L947.4 495.2M959.3 452.2L957.8 495.2M947.4 495.2Q952.6 490.2 957.8 495.2" fill="none" stroke="#14303a" stroke-width="0.9"/>
<path d="M928.1 466.3L926.6 510.3" stroke="#14303a" stroke-width="0.9"/>
<polygon points="875.1,503.4 899.3,486 897.8,530 897.8,570 875.1,583.4" fill="#64767d"/>
<path d="M899.3 486L897.8 530" stroke="#14303a" stroke-width="0.9"/>
<polygon points="1080.8,567.6 1096.7,579.7 1095.2,623.7 1079.3,641.6" fill="#596a71"/>
<path d="M1080.8 567.6L1079.3 641.6" stroke="#14303a" stroke-width="0.9"/>
<path d="M1093.1 577.7L1093.1 585.7" stroke="#14303a" stroke-width="0.8"/>
</g>
<path d="M950.3 452.1Q954.1 449.7 957.9 452.2L1101.6 548.1Q1104.7 550.2 1101.7 552.5L1080.8 567.6L1093.7 577.4Q1096.7 579.7 1093.7 582L1076.2 595.5Q1070.2 600.2 1063.8 596.1L1053.1 589.5Q1052.1 588.8 1051.1 589.5L1032.6 602.6Q1026.4 607 1020.1 602.7L878.2 505.5Q875.1 503.4 878.2 501.2L899.3 486L887.6 477.1Q885 475.1 887.7 473.1L907.9 458.8Q912.2 455.7 916.6 458.6L928.1 466.3Z" fill="none" stroke="#14303a" stroke-width="1"/>
<clipPath id="cpk1"><path d="M737.2 594.9Q741 592.4 744.7 595.1L888.3 699.5Q891.4 701.8 888.4 704.1L865.4 722.2L878.3 732.7Q881.2 735 878.2 737.3L857.7 753.1Q851.8 757.7 845.5 753.5L833.8 745.5Q832.8 744.9 831.9 745.6L810.3 760.9Q804.1 765.3 798.1 760.7L657.4 653.4Q654.4 651.1 657.4 648.8L680.8 631.4L669 621.7Q666.5 619.6 669.2 617.8L691.9 602.3Q696.3 599.4 700.7 602.2L713.4 610.3Z"/></clipPath>
<g clip-path="url(#cpk1)" stroke-linejoin="round">
<rect x="652.4" y="590.4" width="241" height="176.9" fill="#6f7d7c"/>
<polygon points="666.5,619.6 696.3,599.4 697.8,644.6 668,664.8" fill="#65777e"/>
<path d="M668 664.8L697.8 644.6" stroke="#14303a" stroke-width="0.9"/>
<polygon points="696.3,599.4 713.4,610.3 714.9,655.5 697.8,644.6" fill="#57676e"/>
<path d="M697.8 644.6L714.9 655.5" stroke="#14303a" stroke-width="0.9"/>
<polygon points="713.4,610.3 741,592.4 742.5,637.6 714.9,655.5" fill="#63757c"/>
<path d="M714.9 655.5L742.5 637.6" stroke="#14303a" stroke-width="0.9"/>
<polygon points="741,592.4 891.4,701.8 892.9,747 742.5,637.6" fill="#54636a"/>
<path d="M742.5 637.6L892.9 747" stroke="#14303a" stroke-width="0.9"/>
<polygon points="690.8,600.9 701.8,601.9 703.3,646.1 697.8,643.6 692.3,646.1" fill="url(#gFil)"/>
<path d="M690.8 600.9L692.3 646.1M701.8 601.9L703.3 646.1M692.3 646.1Q697.8 641.1 703.3 646.1" fill="none" stroke="#14303a" stroke-width="0.9"/>
<polygon points="735.8,593.9 746.2,594.9 747.7,639.1 742.5,636.6 737.3,639.1" fill="url(#gFil)"/>
<path d="M735.8 593.9L737.3 639.1M746.2 594.9L747.7 639.1M737.3 639.1Q742.5 634.1 747.7 639.1" fill="none" stroke="#14303a" stroke-width="0.9"/>
<path d="M713.4 610.3L714.9 655.5" stroke="#14303a" stroke-width="0.9"/>
<polygon points="654.4,651.1 680.8,631.4 682.3,676.6 682.3,716.6 654.4,731.1" fill="#64767d"/>
<path d="M680.8 631.4L682.3 676.6" stroke="#14303a" stroke-width="0.9"/>
<polygon points="865.4,722.2 881.2,735 882.7,780.2 866.9,797.4" fill="#596a71"/>
<path d="M865.4 722.2L866.9 797.4" stroke="#14303a" stroke-width="0.9"/>
<path d="M877.6 733L877.6 741" stroke="#14303a" stroke-width="0.8"/>
</g>
<path d="M737.2 594.9Q741 592.4 744.7 595.1L888.3 699.5Q891.4 701.8 888.4 704.1L865.4 722.2L878.3 732.7Q881.2 735 878.2 737.3L857.7 753.1Q851.8 757.7 845.5 753.5L833.8 745.5Q832.8 744.9 831.9 745.6L810.3 760.9Q804.1 765.3 798.1 760.7L657.4 653.4Q654.4 651.1 657.4 648.8L680.8 631.4L669 621.7Q666.5 619.6 669.2 617.8L691.9 602.3Q696.3 599.4 700.7 602.2L713.4 610.3Z" fill="none" stroke="#14303a" stroke-width="1"/>
<clipPath id="cslot"><path d="M683.7 1008L959.5 802.1C971.1 794 987.4 791.6 999 794.4C1020 800.5 1032.1 814.9 1031.2 827.7C1030.7 837 1025.8 844 1021.1 847.9L985.1 874.2L745.4 1058.1C733.8 1066.2 722.1 1069.7 712.4 1069.2C695.4 1068.5 679.1 1059.2 671.6 1042.5C666.8 1030.1 671.4 1016.9 683.7 1008Z"/></clipPath>
<g clip-path="url(#cslot)">
<rect x="660" y="785" width="380" height="295" fill="#76838300"/>
<rect x="660" y="785" width="380" height="295" fill="#778483"/>
<polygon points="683.7,1008 959.5,802.1 956,882.4 715.2,1068.5 687.2,1062.7" fill="url(#gSlotW)"/>
<polygon points="683.7,1008 687.2,1062.7 715.2,1073.2 664,1073.2 664,1008" fill="#64757a"/>
<path d="M959.5 802.1L956 882.4Q964.1 875.4 985.1 873.5L1045.6 826.5L1045.6 780L959.5 780Z" fill="url(#gSlotR)"/>
<path d="M959.5 802.1L956 882.4M683.7 1008L687.2 1062.7M956 882.4L715.2 1068.5M956 882.4Q964.1 875.4 985.1 874" fill="none" stroke="#14303a" stroke-width="0.9"/>
</g>
<path d="M683.7 1008L959.5 802.1C971.1 794 987.4 791.6 999 794.4C1020 800.5 1032.1 814.9 1031.2 827.7C1030.7 837 1025.8 844 1021.1 847.9L985.1 874.2L745.4 1058.1C733.8 1066.2 722.1 1069.7 712.4 1069.2C695.4 1068.5 679.1 1059.2 671.6 1042.5C666.8 1030.1 671.4 1016.9 683.7 1008Z" fill="none" stroke="#14303a" stroke-width="1"/>
<path d="M1145.3 342.4C1142.6 343.8 1133.7 349.1 1129 350.8C1124.3 352.5 1121.3 352.7 1117.4 352.4C1113.5 352.1 1107.7 349.5 1105.8 348.9" fill="none" stroke="#13262d" stroke-width="1"/>
<path d="M1105.8 348.9C1104.2 347.3 1099.6 343.1 1096.5 339.6C1093.4 336.1 1090.3 332.3 1087.2 328C1084.1 323.7 1081.4 319.1 1077.9 314C1074.4 308.9 1070.5 302.7 1066.2 297.7C1061.9 292.7 1057.3 287.9 1052.3 283.8C1047.3 279.7 1042.6 276.6 1036 273.3C1029.4 270 1020.5 266.5 1012.7 264C1004.9 261.5 997.1 259.6 989.4 258.2C981.6 256.8 974 255.9 966.2 255.4C958.5 254.9 950.7 254.9 942.9 255.4C935.1 255.9 927.4 256.8 919.6 258.2C911.9 259.6 904.2 261.5 896.4 264C888.6 266.5 880.8 269.6 873 273.3C865.2 277 857.5 281.1 849.8 286C842 290.9 834.2 296.6 826.5 302.4C818.8 308.2 811 314.3 803.3 321C795.5 327.7 788.7 333.6 780 342.5C771.3 351.4 761.1 363.8 751.3 374.7C741.5 385.6 731.1 398.2 721 408C710.9 417.8 700.9 426.3 690.8 433.7C680.7 441.1 670.6 447.1 660.5 452.6C650.4 458.1 638.5 463.1 630 466.5C621.5 469.9 618.5 470.3 609.2 473.2C599.9 476.1 585.9 480.3 574.3 483.6C562.7 486.9 551 490.1 539.4 493.2C527.8 496.3 516.1 499.4 504.5 502.5C492.9 505.6 481.2 508.5 469.6 511.6C458 514.7 446.3 517.8 434.7 521.2C423.1 524.6 411.4 528.2 399.8 532C388.2 535.8 374.9 540.4 364.9 544.2C354.9 548 348.4 550.9 340 554.7C331.6 558.5 322.5 563 314.7 566.8C306.9 570.6 300.4 573.8 293.2 577.6C286 581.4 278.8 585.5 271.7 589.8C264.6 594.1 257.4 598.5 250.3 603.3C243.2 608.1 236 613.4 228.8 618.4C221.6 623.4 214 628.6 207.3 633.4C200.6 638.2 194.1 642.8 188.7 647.3C183.3 651.8 179.1 656.2 175.1 660.2C171.1 664.2 168 667.3 164.4 671.4C160.8 675.5 157.3 680.1 153.7 684.9C150.1 689.6 145.9 695.4 142.9 699.9C139.9 704.4 137.9 707.1 135.4 711.7C132.9 716.4 130.1 722.4 127.9 727.8C125.8 733.2 124 738.7 122.5 743.9C121 749.1 119.9 753.6 118.9 759C117.9 764.4 117.3 770.4 116.7 776.1C116.1 781.8 115.6 787.6 115.5 793.3C115.4 799 115.5 804.9 115.9 810.5C116.4 816.1 116.9 820.6 118.2 827.2C119.5 833.8 121.3 842 123.5 850C125.7 858 128.3 866.8 131.5 875C134.7 883.2 138.2 891.2 142.5 899.5C146.8 907.8 152 916.8 157.5 925C163 933.2 168.8 941.1 175.3 949C181.9 956.9 188.2 964.3 196.8 972.5C205.4 980.7 221.7 994 226.7 998.3" fill="none" stroke="#0c0c0c" stroke-width="1.2" stroke-linejoin="round"/>
<path d="M226.7 998.3C228.9 1000.4 235.6 1006.8 240 1011C244.4 1015.2 248.6 1019.2 253 1023.5C257.4 1027.8 262 1032.2 266.5 1036.5C271 1040.8 273 1043.3 280 1049.2C287 1055.1 298.6 1064.2 308.6 1072C318.6 1079.8 330.5 1089 340 1096.2C349.5 1103.4 356.6 1109 365.7 1115C374.8 1121 385.2 1126.9 394.3 1132.1C403.4 1137.3 410.7 1141.5 420 1146.4C429.3 1151.4 440.8 1157.3 450 1161.8C459.2 1166.3 466.7 1169.9 475 1173.5C483.3 1177.1 491.9 1180.5 500 1183.6C508.1 1186.7 515.5 1189.2 523.3 1191.9C531 1194.6 538.8 1197.2 546.5 1199.6C554.2 1202 562 1204.5 569.8 1206.5C577.6 1208.5 585.4 1210.2 593.1 1211.7C600.9 1213.2 608.5 1214.5 616.3 1215.6C624 1216.7 631.8 1217.5 639.6 1218.2C647.4 1218.9 656.3 1219.3 662.9 1219.6C669.5 1219.9 673.4 1220 679.2 1220C685 1220 690.8 1219.8 697.8 1219.3C704.8 1218.8 713.2 1218 721 1217C728.8 1216 736.5 1214.8 744.3 1213.5C752.1 1212.2 759.8 1211 767.6 1209.3C775.4 1207.6 783.1 1205.4 790.9 1203.1C798.6 1200.8 806.4 1198.2 814.1 1195.4C821.9 1192.6 829.6 1189.6 837.4 1186.1C845.2 1182.6 853.6 1178.4 860.7 1174.4C867.8 1170.4 872.9 1166.6 880 1162C887.1 1157.4 895.7 1152.7 903.6 1147C911.5 1141.3 920.1 1133.8 927.2 1127.9C934.3 1122 939.3 1118 946.3 1111.5C953.3 1105 962.4 1095.5 969.2 1088.6C976 1081.7 982.2 1076 987.3 1070C992.4 1064 995.9 1058.3 1000 1052.5C1004.1 1046.7 1007.9 1040.8 1012 1035C1016.1 1029.2 1020.4 1023.3 1024.5 1017.5C1028.6 1011.7 1032.8 1006.4 1036.8 1000C1040.8 993.6 1044.6 986.1 1048.5 979C1052.4 971.9 1056.5 964.2 1060 957.3C1063.5 950.4 1066.4 944.1 1069.5 937.5C1072.6 930.9 1075.7 924.2 1078.7 917.8C1081.7 911.4 1084.7 905.3 1087.7 899C1090.7 892.7 1093.9 885.8 1096.6 880C1099.3 874.2 1101.5 869.6 1103.8 864.5C1106.1 859.4 1107.6 855.6 1110.4 849.5C1113.2 843.4 1116.7 835 1120.4 827.7C1124.1 820.4 1128.5 812.1 1132.6 805.8C1136.6 799.5 1140.7 794.7 1144.7 790C1148.8 785.3 1151.8 782.3 1156.9 777.8C1162 773.3 1169 767.7 1175.1 763.2C1181.2 758.8 1187.2 754.9 1193.3 751.1C1199.4 747.4 1204.5 744.5 1211.6 740.7C1218.7 737 1227.8 732.6 1235.9 728.6C1244 724.6 1251.6 721 1260.2 717C1268.8 713 1279.2 708.2 1287.3 704.5C1295.4 700.8 1301.6 697.9 1308.8 694.5C1316 691.1 1323.1 687.6 1330.3 684C1337.5 680.4 1344.5 676.7 1351.7 672.8C1358.9 668.9 1366 664.8 1373.2 660.5C1380.4 656.2 1387.6 651.9 1394.7 646.9C1401.8 641.9 1410 636 1416.1 630.8C1422.2 625.6 1427.1 620.4 1431.2 615.8C1435.3 611.1 1438.3 606.7 1440.8 602.9C1443.3 599.1 1445.5 594.8 1446.4 593.2" fill="none" stroke="#13262d" stroke-width="1" stroke-linejoin="round"/>
<path d="M1446.4 593.2C1447 590.9 1449.1 584.1 1450 579.3C1450.9 574.5 1451.8 568.3 1452 564.3C1452.2 560.2 1452.3 559.5 1451.4 555C1450.5 550.5 1449 543.4 1446.4 537.5C1443.9 531.6 1440.2 525.5 1436.1 519.9C1431.9 514.3 1425.9 507.1 1421.5 503.7C1417.1 500.3 1411.7 500 1409.7 499.3" fill="none" stroke="#0c0c0c" stroke-width="1.1" stroke-linejoin="round"/>
<path d="M1409.7 499.3C1408.5 500 1406.8 500.3 1402.4 503.7C1398 507.1 1391.4 514 1383.3 519.9C1375.2 525.8 1363.8 533.5 1354 538.9C1344.2 544.3 1334.5 548.8 1324.7 552.1C1314.9 555.4 1305.1 557.3 1295.3 558.9C1285.5 560.5 1275.8 561.6 1266 561.5C1256.2 561.4 1246.5 560.3 1236.7 558C1226.9 555.7 1215.6 551.9 1207.3 547.7C1199 543.6 1192.4 538.2 1186.8 533.1C1181.2 528 1176.9 522.6 1173.6 517C1170.3 511.4 1167.8 504.7 1167.1 499.3C1166.4 493.9 1167 488.6 1169.2 484.7C1171.4 480.8 1178.2 477.4 1180 476" fill="none" stroke="#0e1f26" stroke-width="1" stroke-linejoin="round"/>
<path d="M1103.4 347.8C1099.9 345.5 1089.9 338.9 1082.5 333.8C1075.1 328.8 1066.8 322.1 1059 317.5C1051.2 312.9 1043.7 309.2 1036 305.9C1028.3 302.6 1020.5 299.5 1012.7 297.7C1004.9 295.9 997.1 295.2 989.4 295C981.6 294.8 974 295 966.2 296.6C958.5 298.2 950.7 301 942.9 304.7C935.1 308.4 927.4 313.3 919.6 318.7C911.9 324.1 904.2 330.7 896.4 337.3C888.6 343.9 879.1 352.7 873 358.2C866.9 363.7 867.7 362.9 860 370.2C852.3 377.5 837.5 391.8 826.9 401.9C816.3 412 808 420.5 796.6 430.7C785.2 440.9 773.4 451.7 758.8 463.2C744.2 474.7 720.4 491.5 708.9 499.9C697.4 508.2 697.8 509 690 513.3C682.2 517.6 672.1 521.3 662.1 525.8C652.1 530.3 641.7 535.8 630 540.3C618.3 544.8 604 549 591.8 552.6C579.6 556.2 568.5 559.2 556.9 562.2C545.3 565.2 533.6 568 522 570.9C510.4 573.8 499.3 576.4 487.1 579.6C474.9 582.9 461.8 586.2 448.7 590.4C435.6 594.6 419.6 600 408.5 604.9C397.4 609.8 390.8 613.9 382.4 619.8C374 625.6 365 633.8 357.9 640C350.8 646.2 347.2 649 340 657C332.8 665 322.5 676.8 314.7 688.1C306.9 699.4 299.1 712.8 293.2 724.6C287.3 736.4 283.2 748.9 279.5 759C275.8 769.1 273.5 776.9 271 785C268.5 793.1 266.9 799.1 264.5 807.9C262.1 816.7 259.2 827.6 256.7 838C254.1 848.4 251.7 858.8 249.2 870.2C246.7 881.7 244 894.9 241.7 906.7C239.4 918.5 237.3 929.9 235.3 941C233.3 952.1 231.3 963.7 229.9 973.2C228.5 982.8 227.4 994.1 226.9 998.3" fill="none" stroke="#3a90c4" stroke-width="1"/>
<path d="M1411.2 492C1411.3 495.7 1412.3 506.4 1411.8 514C1411.3 521.6 1410.6 529.2 1408.3 537.5C1406 545.8 1402.7 555.1 1398 563.9C1393.3 572.7 1386.3 583.2 1380.4 590.3C1374.5 597.4 1368.4 602.1 1362.8 606.4C1357.2 610.7 1355.5 612 1346.7 616C1337.9 620 1323.5 625.7 1310 630.7C1296.5 635.7 1280.7 641 1266 646C1251.3 651 1233 656.9 1222 660.7C1211 664.5 1207.3 665.2 1200 668.9C1192.7 672.6 1185.6 676.7 1178 682.7C1170.4 688.7 1161.3 696.7 1154.5 704.7C1147.7 712.8 1142 721.2 1136.9 731C1131.8 740.8 1127.4 752 1123.7 763.3C1120 774.5 1117 787.7 1114.9 798.5C1112.8 809.3 1111.9 819.3 1111.1 827.9C1110.3 836.5 1110.2 846.2 1110 849.9" fill="none" stroke="#5ab4e6" stroke-width="1.4"/>
<path d="M1145.3 342.4L1013.5 431Q1008 437 1017 443L1038 456L1120 508Q1131 512 1146 502L1180 476" fill="none" stroke="#13262d" stroke-width="1"/>
<path d="M1412 492L1525.600 493.800L1515.300 540.400Z" fill="#eef7fd"/>
<path d="M1412.7 492L1515.3 540.4L1524.3 494.500" fill="none" stroke="#5ab4e6" stroke-width="1.6"/>
<path d="M1410.3 488.500L1525.800 493.600" stroke="#111" stroke-width="1.8"/>
<circle cx="1410.3" cy="488.5" r="3.7" fill="#e4deec" stroke="#2a2a2a" stroke-width="1"/>
<path d="M226.700 998.600L-2 1047.500" stroke="#5ab4e6" stroke-width="1.6"/>
<path d="M226.700 998.300L-2 1005.300" stroke="#111" stroke-width="1.8"/>
<circle cx="226.700" cy="998.300" r="3.6" fill="#b692e0" stroke="#4b2a78" stroke-width="1.1"/><circle cx="226.700" cy="998.300" r="1.2" fill="#2a1a44"/>
<circle cx="966.2" cy="296.6" r="3.4" fill="#4d5a5e" opacity="0.55"/><circle cx="966.2" cy="296.6" r="2.2" fill="#23292c"/>
<circle cx="1103.8" cy="347.6" r="3.4" fill="#4d5a5e" opacity="0.55"/><circle cx="1103.8" cy="347.6" r="2.2" fill="#23292c"/>
<circle cx="758.5" cy="462.5" r="3.4" fill="#4d5a5e" opacity="0.55"/><circle cx="758.5" cy="462.5" r="2.2" fill="#23292c"/>
<circle cx="448.5" cy="590" r="3.4" fill="#4d5a5e" opacity="0.55"/><circle cx="448.5" cy="590" r="2.2" fill="#23292c"/>
<circle cx="1346.7" cy="616" r="3.4" fill="#4d5a5e" opacity="0.55"/><circle cx="1346.7" cy="616" r="2.2" fill="#23292c"/>
<circle cx="1200" cy="668.9" r="3.4" fill="#4d5a5e" opacity="0.55"/><circle cx="1200" cy="668.9" r="2.2" fill="#23292c"/>
<circle cx="1110" cy="849.9" r="3.4" fill="#4d5a5e" opacity="0.55"/><circle cx="1110" cy="849.9" r="2.2" fill="#23292c"/>
<path d="M1189.600 468.400L1261.400 415.600" stroke="#b59be4" stroke-width="1.7"/>
<circle cx="1186" cy="471" r="4.6" fill="none" stroke="#b07be2" stroke-width="1.7"/><circle cx="1265" cy="413" r="4.6" fill="none" stroke="#b07be2" stroke-width="1.7"/>
<g>
<ellipse cx="1662" cy="228" rx="34" ry="15" fill="url(#gCubeSh)"/>
<polygon points="1657,161.2 1692.6,183.5 1656,208.4 1621.3,183" fill="#efefef"/>
<polygon points="1621.3,183 1656,208.4 1656,241 1625.2,216.1" fill="url(#gCubeL)"/>
<polygon points="1656,208.4 1692.6,183.5 1687,216 1656,241" fill="url(#gCubeR)"/>
<path d="M1657 161.2L1692.600 183.5L1656 208.400L1621.300 183ZM1656 208.400L1656 241M1692.600 183.500L1687 216L1656 241L1625.200 216.100L1621.300 183" fill="none" stroke="#a8a8a8" stroke-width="0.9" stroke-dasharray="3.500 2.500"/>
<polygon points="1656,200.5 1663,205.5 1663,212 1656,216.5 1649.5,212 1649.5,205.5" fill="#e3e6ec" opacity="0.9"/>
<text transform="matrix(0.86,-0.5,0.8,0.56,1647.5,190.5)" font-family="Liberation Sans,sans-serif" font-size="10.5" font-weight="bold" fill="#8d9096" opacity="0.9">TOP</text>
<text transform="matrix(0.8,0.58,0,1,1631,205)" font-family="Liberation Sans,sans-serif" font-size="8.5" fill="#9b9ea3" opacity="0.9">LEFT</text>
<text transform="matrix(0.8,-0.56,0,1,1662,225.5)" font-family="Liberation Sans,sans-serif" font-size="8" font-style="italic" fill="#9b9ea3" opacity="0.9">FRONT</text>
<path d="M1625.2 216.100L1618.800 177.500" stroke="#5fe25f" stroke-width="2"/>
<path d="M1625.2 216.100L1661 247" stroke="#8f8ff2" stroke-width="2"/>
<text x="1613" y="175" font-family="Liberation Sans,sans-serif" font-size="12" font-weight="bold" fill="#86f086">Y</text>
<text x="1662.500" y="257" font-family="Liberation Sans,sans-serif" font-size="12.5" font-weight="bold" fill="#9a9af5">Z</text>
</g>
</svg>
<!--VIEWPORT_UI-->
</div>
<!-- browser / comments -->
<div class="panelhdr" style="top:141px"><span style="position:absolute;left:24px;top:0;font-size:11px;letter-spacing:-0.7px">BROWSER</span></div>
<div class="panelhdr" style="top:1321px"><span style="position:absolute;left:24px;top:0;font-size:11px;letter-spacing:-0.9px">COMMENTS</span></div>
<div class="row" style="left:40px;top:171px;width:176px">
<span style="left:25px;top:2px;width:126px;height:16px;background:#a0a0a0"></span><span style="left:58px;color:#fff;font-weight:bold;letter-spacing:0.32px">AlteredTele v9</span>
</div>
<div class="row" style="left:58px;top:195px;width:134px">
<span style="left:33px;letter-spacing:-0.18px">Document Settings</span>
</div>
<div class="row" style="left:58px;top:219px;width:110px">
<span style="left:33px;letter-spacing:0.01px">Named Views</span>
</div>
<div class="row" style="left:58px;top:243px;width:95px">
<span style="left:58px;letter-spacing:-0.28px">Origin</span>
</div>
<div class="row" style="left:58px;top:267px;width:103px">
<span style="left:58px;letter-spacing:-0.15px">Bodies</span>
</div>
<div class="row" style="left:76px;top:291px;width:131px">
<span style="left:58px;letter-spacing:-0.16px">StandardTele</span>
</div>
<div class="row" style="left:58px;top:315px;width:119px">
<span style="left:58px;letter-spacing:-0.05px">Canvases</span>
</div>
<div class="row" style="left:76px;top:339px;width:131px">
<span style="left:58px;letter-spacing:-0.36px">DoubleCutLP</span>
</div>
<div class="row" style="left:76px;top:363px;width:119px">
<span style="left:58px;letter-spacing:-0.59px">Tele_JPEG</span>
</div>
<div class="row" style="left:58px;top:387px;width:115px">
<span style="left:58px;letter-spacing:-0.11px">Sketches</span>
</div>
<div class="row" style="left:76px;top:411px;width:119px">
<span style="left:58px;letter-spacing:-0.2px">CenterLine</span>
</div>
<div class="row" style="left:76px;top:435px;width:95px">
<span style="left:58px;letter-spacing:-0.08px">Body</span>
</div>
<div class="row" style="left:76px;top:459px;width:135px">
<span style="left:58px;letter-spacing:-0.21px">VolumeCavity</span>
</div>
<div class="row" style="left:76px;top:483px;width:103px">
<span style="left:58px;letter-spacing:-0.44px">Pickup1</span>
</div>
<div class="row" style="left:76px;top:507px;width:107px">
<span style="left:58px;letter-spacing:-0.3px">Pickup2</span>
</div>
<div class="row" style="left:76px;top:531px;width:115px">
<span style="left:58px;letter-spacing:-0.14px">Sketch16</span>
</div>
<div class="row" style="left:76px;top:555px;width:115px">
<span style="left:58px;letter-spacing:-0.14px">Sketch17</span>
</div>
<div class="row" style="left:76px;top:579px;width:115px">
<span style="left:58px;letter-spacing:-0.14px">Sketch18</span>
</div>
<div class="row" style="left:76px;top:603px;width:115px">
<span style="left:58px;letter-spacing:-0.14px">Sketch20</span>
</div>
<div class="row" style="left:58px;top:627px;width:131px">
<span style="left:58px;letter-spacing:-0.12px">Construction</span>
</div>
<svg style="left:0;top:0" width="320" height="1398" viewBox="0 0 320 1398"><defs><linearGradient id="gArr" x1="0" y1="0" x2="1" y2="1"><stop offset="0.4" stop-color="#e4e4e4"/><stop offset="0.75" stop-color="#8c8c8c"/><stop offset="1" stop-color="#2e2e2e"/></linearGradient><linearGradient id="gSky" x1="0" y1="0" x2="1" y2="1"><stop offset="0" stop-color="#9fd0f6"/><stop offset="1" stop-color="#d6e9f6"/></linearGradient><linearGradient id="gMtn" x1="0" y1="0" x2="1" y2="0.6"><stop offset="0" stop-color="#77828f"/><stop offset="1" stop-color="#a4adb8"/></linearGradient><linearGradient id="gBody" x1="0" y1="0" x2="1" y2="0"><stop offset="0" stop-color="#f4f4f4"/><stop offset="0.6" stop-color="#d9dadd"/><stop offset="1" stop-color="#bfc1c6"/></linearGradient></defs>
<path d="M21.5 186.5l11 -11.500v11.500z" fill="url(#gArr)" stroke="#2a2a2a" stroke-width="1" stroke-linejoin="round"/>
<path d="M43 181q8 -8.500 16 0q-8 8.500 -16 0z" fill="#8e8e8e"/><circle cx="51" cy="181" r="3.100" fill="#f2f2f2"/><circle cx="51" cy="181" r="1.700" fill="#8e8e8e"/>
<path d="M69 177l3 -3.500h11.500v12l-3 3.500h-11.500z" fill="#fafafa" stroke="#3a3a3a" stroke-width="1" stroke-linejoin="round"/><rect x="69.5" y="177.5" width="10.500" height="11" fill="#e0e4ea"/><path d="M69 177h11.500l3 -3.500M80.5 177v12" fill="none" stroke="#8a8a8a" stroke-width="0.800"/>
<path d="M40.5 199l8.500 6 -8.500 6z" fill="#fff" stroke="#2a2a2a" stroke-width="1.100" stroke-linejoin="round"/>
<rect x="67" y="196.7" width="4" height="4.500" transform="rotate(0 69 205)" fill="#8e8e8e"/><rect x="67" y="196.7" width="4" height="4.500" transform="rotate(45 69 205)" fill="#8e8e8e"/><rect x="67" y="196.7" width="4" height="4.500" transform="rotate(90 69 205)" fill="#8e8e8e"/><rect x="67" y="196.7" width="4" height="4.500" transform="rotate(135 69 205)" fill="#8e8e8e"/><rect x="67" y="196.7" width="4" height="4.500" transform="rotate(180 69 205)" fill="#8e8e8e"/><rect x="67" y="196.7" width="4" height="4.500" transform="rotate(225 69 205)" fill="#8e8e8e"/><rect x="67" y="196.7" width="4" height="4.500" transform="rotate(270 69 205)" fill="#8e8e8e"/><rect x="67" y="196.7" width="4" height="4.500" transform="rotate(315 69 205)" fill="#8e8e8e"/><circle cx="69" cy="205" r="6" fill="#8e8e8e"/><circle cx="69" cy="205" r="2.600" fill="#f2f2f2"/>
<path d="M40.5 223l8.500 6 -8.500 6z" fill="#fff" stroke="#2a2a2a" stroke-width="1.100" stroke-linejoin="round"/>
<path d="M61 222h6l1.500 2h8.500v11.500h-16z" fill="#8e8e8e"/><path d="M61 224.6h6" stroke="#f2f2f2" stroke-width="0.800"/>
<path d="M40.5 247l8.500 6 -8.500 6z" fill="#fff" stroke="#2a2a2a" stroke-width="1.100" stroke-linejoin="round"/>
<path d="M61 253q8 -8.500 16 0q-8 8.500 -16 0z" fill="#dedede"/><circle cx="69" cy="253" r="3" fill="#f2f2f2"/><circle cx="69" cy="253" r="1.600" fill="#dedede"/><path d="M63.5 248.2l9 9.500" stroke="#f2f2f2" stroke-width="2.400"/><path d="M64.5 248.2l9 9.500" stroke="#d8d8d8" stroke-width="1.300"/>
<path d="M86 246h6l1.500 2h8.500v11.500h-16z" fill="#8e8e8e"/><path d="M86 248.6h6" stroke="#f2f2f2" stroke-width="0.800"/>
<path d="M39.5 282.5l11 -11.500v11.500z" fill="url(#gArr)" stroke="#2a2a2a" stroke-width="1" stroke-linejoin="round"/>
<path d="M61 277q8 -8.500 16 0q-8 8.500 -16 0z" fill="#8e8e8e"/><circle cx="69" cy="277" r="3.100" fill="#f2f2f2"/><circle cx="69" cy="277" r="1.700" fill="#8e8e8e"/>
<path d="M86 270h6l1.500 2h8.500v11.500h-16z" fill="#8e8e8e"/><path d="M86 272.6h6" stroke="#f2f2f2" stroke-width="0.800"/>
<path d="M79 301q8 -8.500 16 0q-8 8.500 -16 0z" fill="#8e8e8e"/><circle cx="87" cy="301" r="3.100" fill="#f2f2f2"/><circle cx="87" cy="301" r="1.700" fill="#8e8e8e"/>
<rect x="104.5" y="294" width="15" height="14.500" rx="4" ry="3.500" fill="#fbfbfb" stroke="#2e2e2e" stroke-width="1.200"/><path d="M108.5 299.5h7v6.500c-1 1 -6 1 -7 0z" fill="url(#gBody)"/>
<path d="M39.5 330.5l11 -11.500v11.500z" fill="url(#gArr)" stroke="#2a2a2a" stroke-width="1" stroke-linejoin="round"/>
<path d="M61 325q8 -8.500 16 0q-8 8.500 -16 0z" fill="#8e8e8e"/><circle cx="69" cy="325" r="3.100" fill="#f2f2f2"/><circle cx="69" cy="325" r="1.700" fill="#8e8e8e"/>
<path d="M86 318h6l1.500 2h8.500v11.500h-16z" fill="#8e8e8e"/><path d="M86 320.6h6" stroke="#f2f2f2" stroke-width="0.800"/>
<path d="M79 349q8 -8.500 16 0q-8 8.500 -16 0z" fill="#dedede"/><circle cx="87" cy="349" r="3" fill="#f2f2f2"/><circle cx="87" cy="349" r="1.600" fill="#dedede"/><path d="M81.5 344.2l9 9.500" stroke="#f2f2f2" stroke-width="2.400"/><path d="M82.5 344.2l9 9.500" stroke="#d8d8d8" stroke-width="1.300"/>
<rect x="104.5" y="342" width="15" height="14.500" fill="url(#gSky)" stroke="#3f3f3f" stroke-width="1"/><path d="M105 352l7 -7 7 6v5h-14z" fill="url(#gMtn)"/><circle cx="115.5" cy="346" r="1.700" fill="#f8e58c"/><circle cx="108.5" cy="352.5" r="3.100" fill="none" stroke="#d9262c" stroke-width="1.400"/><path d="M106.4 350.4l4.200 4.200" stroke="#d9262c" stroke-width="1.300"/>
<path d="M79 373q8 -8.500 16 0q-8 8.500 -16 0z" fill="#dedede"/><circle cx="87" cy="373" r="3" fill="#f2f2f2"/><circle cx="87" cy="373" r="1.600" fill="#dedede"/><path d="M81.5 368.2l9 9.500" stroke="#f2f2f2" stroke-width="2.400"/><path d="M82.5 368.2l9 9.500" stroke="#d8d8d8" stroke-width="1.300"/>
<rect x="104.5" y="366" width="15" height="14.500" fill="url(#gSky)" stroke="#3f3f3f" stroke-width="1"/><path d="M105 376l7 -7 7 6v5h-14z" fill="url(#gMtn)"/><circle cx="115.5" cy="370" r="1.700" fill="#f8e58c"/><circle cx="108.5" cy="376.5" r="3.100" fill="none" stroke="#d9262c" stroke-width="1.400"/><path d="M106.4 374.4l4.200 4.200" stroke="#d9262c" stroke-width="1.300"/>
<path d="M39.5 402.5l11 -11.500v11.500z" fill="url(#gArr)" stroke="#2a2a2a" stroke-width="1" stroke-linejoin="round"/>
<path d="M61 397q8 -8.500 16 0q-8 8.500 -16 0z" fill="#8e8e8e"/><circle cx="69" cy="397" r="3.100" fill="#f2f2f2"/><circle cx="69" cy="397" r="1.700" fill="#8e8e8e"/>
<path d="M86 390h6l1.500 2h8.500v11.500h-16z" fill="#8e8e8e"/><path d="M86 392.6h6" stroke="#f2f2f2" stroke-width="0.800"/>
<path d="M79 421q8 -8.500 16 0q-8 8.500 -16 0z" fill="#dedede"/><circle cx="87" cy="421" r="3" fill="#f2f2f2"/><circle cx="87" cy="421" r="1.600" fill="#dedede"/><path d="M81.5 416.2l9 9.500" stroke="#f2f2f2" stroke-width="2.400"/><path d="M82.5 416.2l9 9.500" stroke="#d8d8d8" stroke-width="1.300"/>
<rect x="105.3" y="414" width="12.500" height="12.500" fill="none" stroke="#4a4a4a" stroke-width="1" stroke-dasharray="5 2.500"/><rect x="104.3" y="413" width="2" height="2" fill="#1f7fe0"/><rect x="116.8" y="413" width="2" height="2" fill="#1f7fe0"/><rect x="104.3" y="425.5" width="2" height="2" fill="#1f7fe0"/><path d="M113.8 426l4.500 -4.500 2 2 -4.500 4.500z" fill="#f5b335"/><path d="M118.3 421.5l1.300 -1.300 2 2 -1.300 1.300z" fill="#ef3b3b"/><path d="M113.8 426l-1.200 3.200 3.200 -1.200z" fill="#555"/>
<path d="M79 445q8 -8.500 16 0q-8 8.500 -16 0z" fill="#dedede"/><circle cx="87" cy="445" r="3" fill="#f2f2f2"/><circle cx="87" cy="445" r="1.600" fill="#dedede"/><path d="M81.5 440.2l9 9.500" stroke="#f2f2f2" stroke-width="2.400"/><path d="M82.5 440.2l9 9.500" stroke="#d8d8d8" stroke-width="1.300"/>
<rect x="105.3" y="438" width="12.500" height="12.500" fill="none" stroke="#4a4a4a" stroke-width="1" stroke-dasharray="5 2.500"/><rect x="104.3" y="437" width="2" height="2" fill="#1f7fe0"/><rect x="116.8" y="437" width="2" height="2" fill="#1f7fe0"/><rect x="104.3" y="449.5" width="2" height="2" fill="#1f7fe0"/><path d="M113.8 450l4.500 -4.500 2 2 -4.500 4.500z" fill="#f5b335"/><path d="M118.3 445.5l1.300 -1.300 2 2 -1.300 1.300z" fill="#ef3b3b"/><path d="M113.8 450l-1.200 3.200 3.200 -1.200z" fill="#555"/>
<path d="M79 469q8 -8.500 16 0q-8 8.500 -16 0z" fill="#dedede"/><circle cx="87" cy="469" r="3" fill="#f2f2f2"/><circle cx="87" cy="469" r="1.600" fill="#dedede"/><path d="M81.5 464.2l9 9.500" stroke="#f2f2f2" stroke-width="2.400"/><path d="M82.5 464.2l9 9.500" stroke="#d8d8d8" stroke-width="1.300"/>
<rect x="105.3" y="462" width="12.500" height="12.500" fill="none" stroke="#4a4a4a" stroke-width="1" stroke-dasharray="5 2.500"/><rect x="104.3" y="461" width="2" height="2" fill="#1f7fe0"/><rect x="116.8" y="461" width="2" height="2" fill="#1f7fe0"/><rect x="104.3" y="473.5" width="2" height="2" fill="#1f7fe0"/><path d="M113.8 474l4.500 -4.500 2 2 -4.500 4.500z" fill="#f5b335"/><path d="M118.3 469.5l1.300 -1.300 2 2 -1.300 1.300z" fill="#ef3b3b"/><path d="M113.8 474l-1.200 3.200 3.200 -1.200z" fill="#555"/>
<path d="M79 493q8 -8.500 16 0q-8 8.500 -16 0z" fill="#dedede"/><circle cx="87" cy="493" r="3" fill="#f2f2f2"/><circle cx="87" cy="493" r="1.600" fill="#dedede"/><path d="M81.5 488.2l9 9.500" stroke="#f2f2f2" stroke-width="2.400"/><path d="M82.5 488.2l9 9.500" stroke="#d8d8d8" stroke-width="1.300"/>
<rect x="105.3" y="486" width="12.500" height="12.500" fill="none" stroke="#4a4a4a" stroke-width="1" stroke-dasharray="5 2.500"/><rect x="104.3" y="485" width="2" height="2" fill="#1f7fe0"/><rect x="116.8" y="485" width="2" height="2" fill="#1f7fe0"/><rect x="104.3" y="497.5" width="2" height="2" fill="#1f7fe0"/><path d="M113.8 498l4.500 -4.500 2 2 -4.500 4.500z" fill="#f5b335"/><path d="M118.3 493.5l1.300 -1.300 2 2 -1.300 1.300z" fill="#ef3b3b"/><path d="M113.8 498l-1.200 3.200 3.200 -1.200z" fill="#555"/>
<path d="M79 517q8 -8.500 16 0q-8 8.500 -16 0z" fill="#dedede"/><circle cx="87" cy="517" r="3" fill="#f2f2f2"/><circle cx="87" cy="517" r="1.600" fill="#dedede"/><path d="M81.5 512.2l9 9.500" stroke="#f2f2f2" stroke-width="2.400"/><path d="M82.5 512.2l9 9.500" stroke="#d8d8d8" stroke-width="1.300"/>
<rect x="105.3" y="510" width="12.500" height="12.500" fill="none" stroke="#4a4a4a" stroke-width="1" stroke-dasharray="5 2.500"/><rect x="104.3" y="509" width="2" height="2" fill="#1f7fe0"/><rect x="116.8" y="509" width="2" height="2" fill="#1f7fe0"/><rect x="104.3" y="521.5" width="2" height="2" fill="#1f7fe0"/><path d="M113.8 522l4.500 -4.500 2 2 -4.500 4.500z" fill="#f5b335"/><path d="M118.3 517.5l1.300 -1.300 2 2 -1.300 1.300z" fill="#ef3b3b"/><path d="M113.8 522l-1.200 3.200 3.200 -1.200z" fill="#555"/>
<path d="M79 541q8 -8.500 16 0q-8 8.500 -16 0z" fill="#8e8e8e"/><circle cx="87" cy="541" r="3.100" fill="#f2f2f2"/><circle cx="87" cy="541" r="1.700" fill="#8e8e8e"/>
<rect x="105.3" y="534" width="12.500" height="12.500" fill="none" stroke="#4a4a4a" stroke-width="1" stroke-dasharray="5 2.500"/><rect x="104.3" y="533" width="2" height="2" fill="#1f7fe0"/><rect x="116.8" y="533" width="2" height="2" fill="#1f7fe0"/><rect x="104.3" y="545.5" width="2" height="2" fill="#1f7fe0"/><path d="M113.8 546l4.500 -4.500 2 2 -4.500 4.500z" fill="#f5b335"/><path d="M118.3 541.5l1.300 -1.300 2 2 -1.300 1.300z" fill="#ef3b3b"/><path d="M113.8 546l-1.200 3.200 3.200 -1.200z" fill="#555"/>
<path d="M79 565q8 -8.500 16 0q-8 8.500 -16 0z" fill="#8e8e8e"/><circle cx="87" cy="565" r="3.100" fill="#f2f2f2"/><circle cx="87" cy="565" r="1.700" fill="#8e8e8e"/>
<rect x="105.3" y="558" width="12.500" height="12.500" fill="none" stroke="#4a4a4a" stroke-width="1" stroke-dasharray="5 2.500"/><rect x="104.3" y="557" width="2" height="2" fill="#1f7fe0"/><rect x="116.8" y="557" width="2" height="2" fill="#1f7fe0"/><rect x="104.3" y="569.5" width="2" height="2" fill="#1f7fe0"/><path d="M113.8 570l4.500 -4.500 2 2 -4.500 4.500z" fill="#f5b335"/><path d="M118.3 565.5l1.300 -1.300 2 2 -1.300 1.300z" fill="#ef3b3b"/><path d="M113.8 570l-1.200 3.200 3.200 -1.200z" fill="#555"/>
<path d="M79 589q8 -8.500 16 0q-8 8.500 -16 0z" fill="#8e8e8e"/><circle cx="87" cy="589" r="3.100" fill="#f2f2f2"/><circle cx="87" cy="589" r="1.700" fill="#8e8e8e"/>
<rect x="105.3" y="582" width="12.500" height="12.500" fill="none" stroke="#4a4a4a" stroke-width="1" stroke-dasharray="5 2.500"/><rect x="104.3" y="581" width="2" height="2" fill="#1f7fe0"/><rect x="116.8" y="581" width="2" height="2" fill="#1f7fe0"/><rect x="104.3" y="593.5" width="2" height="2" fill="#1f7fe0"/><path d="M113.8 594l4.500 -4.500 2 2 -4.500 4.500z" fill="#f5b335"/><path d="M118.3 589.5l1.300 -1.300 2 2 -1.300 1.300z" fill="#ef3b3b"/><path d="M113.8 594l-1.200 3.200 3.200 -1.200z" fill="#555"/>
<path d="M79 613q8 -8.500 16 0q-8 8.500 -16 0z" fill="#8e8e8e"/><circle cx="87" cy="613" r="3.100" fill="#f2f2f2"/><circle cx="87" cy="613" r="1.700" fill="#8e8e8e"/>
<rect x="105.3" y="606" width="12.500" height="12.500" fill="none" stroke="#4a4a4a" stroke-width="1" stroke-dasharray="5 2.500"/><rect x="104.3" y="605" width="2" height="2" fill="#1f7fe0"/><rect x="116.8" y="605" width="2" height="2" fill="#1f7fe0"/><rect x="104.3" y="617.5" width="2" height="2" fill="#1f7fe0"/><path d="M113.8 618l4.500 -4.500 2 2 -4.500 4.500z" fill="#f5b335"/><path d="M118.3 613.5l1.300 -1.300 2 2 -1.300 1.300z" fill="#ef3b3b"/><path d="M113.8 618l-1.200 3.200 3.200 -1.200z" fill="#555"/>
<path d="M40.5 631l8.500 6 -8.500 6z" fill="#fff" stroke="#2a2a2a" stroke-width="1.100" stroke-linejoin="round"/>
<path d="M61 637q8 -8.500 16 0q-8 8.500 -16 0z" fill="#8e8e8e"/><circle cx="69" cy="637" r="3.100" fill="#f2f2f2"/><circle cx="69" cy="637" r="1.700" fill="#8e8e8e"/>
<path d="M86 630h6l1.500 2h8.500v11.500h-16z" fill="#8e8e8e"/><path d="M86 632.6h6" stroke="#f2f2f2" stroke-width="0.800"/>
<circle cx="201.500" cy="181" r="6.300" fill="#fff" stroke="#2a2a2a" stroke-width="1.100"/><circle cx="201.500" cy="181" r="2.600" fill="#2a2a2a"/>
<path d="M9 153l5 -3.500v7zM14.500 153l5 -3.500v7z" fill="#2a2a2a"/>
<circle cx="287.500" cy="153.500" r="4.300" fill="#2a2a2a"/><path d="M285 153.500h5" stroke="#fff" stroke-width="1.400"/>
<path d="M299.500 148v11" stroke="#8a8a8a" stroke-width="1"/><path d="M301.500 150v7" stroke="#8a8a8a" stroke-width="1"/>
<circle cx="287.500" cy="1333.500" r="4.300" fill="#2a2a2a"/><path d="M285 1333.500h5M287.500 1331v5" stroke="#fff" stroke-width="1.300"/>
<path d="M299.500 1328v11" stroke="#8a8a8a" stroke-width="1"/><path d="M301.500 1330v7" stroke="#8a8a8a" stroke-width="1"/>
</svg>
<div id="navbar"></div>
<div id="timeline"></div>
<svg style="left:0;top:1310px" width="1719" height="88" viewBox="0 1310 1719 88">
<defs><linearGradient id="gMon" x1="0" y1="0" x2="0" y2="1"><stop offset="0" stop-color="#a9c4ea"/><stop offset="1" stop-color="#7fa3d6"/></linearGradient><radialGradient id="gLens" cx="0.4" cy="0.35" r="0.7"><stop offset="0" stop-color="#ffffff"/><stop offset="1" stop-color="#bfd6dc"/></radialGradient></defs>
<path d="M744 1327v14.500" stroke="#2a2a2a" stroke-width="1.300"/><path d="M741.500 1329.500l2.500 -3.500 2.500 3.500" fill="#fff" stroke="#2a2a2a" stroke-width="1"/>
<path d="M739.500 1337.500c-3 -1 -3 -3.300 0.500 -4.300c4 -1 9 -0.600 11 0.800c1.800 1.500 -0.500 3.300 -5.500 3.700" fill="none" stroke="#2a2a2a" stroke-width="1.300"/><path d="M741.500 1335l-3.300 2.500 3.500 2.300z" fill="#2a2a2a"/>
<path d="M757 1332h6l-3 3.800z" fill="#2a2a2a"/>
<path d="M770 1331.500l4.500 -4 2.500 2.500 6 -3 1 4.500" fill="#d0d0d0" stroke="#2a2a2a" stroke-width="0.900"/><rect x="769.500" y="1331.500" width="15.500" height="9.500" fill="#e9e9e9" stroke="#2a2a2a" stroke-width="1.100"/><rect x="772.500" y="1334.500" width="9.500" height="3.500" fill="#b8bcc6" stroke="#2a2a2a" stroke-width="0.800"/>
<path d="M799.500 1341c-1.500 -2 -3 -4.500 -4 -6c-0.700 -1.200 0.700 -2 1.700 -1l2 2.300v-7.300c0 -1.300 1.800 -1.300 1.800 0v-1.300c0 -1.400 1.900 -1.400 1.900 0v1c0 -1.300 1.900 -1.300 1.900 0.200v1.200c0 -1.200 1.800 -1.200 1.800 0.300c0.200 3.500 0.400 7 -1.400 10.600z" fill="#fff" stroke="#2a2a2a" stroke-width="1"/><path d="M801 1333.500v-3M802.900 1333.500v-4M804.800 1333.500v-3.500" stroke="#2a2a2a" stroke-width="0.700"/>
<circle cx="826.500" cy="1332.500" r="4.600" fill="url(#gLens)" stroke="#2a2a2a" stroke-width="1.200"/><path d="M829.800 1336l4 4.300" stroke="#2a2a2a" stroke-width="2.400" stroke-linecap="round"/><path d="M832.500 1329h4M834.500 1327v4M832.500 1333h4" stroke="#2a2a2a" stroke-width="0.900"/>
<rect x="847.500" y="1326.500" width="15" height="14.500" fill="none" stroke="#2a2a2a" stroke-width="0.900" stroke-dasharray="2 1.500"/><circle cx="854" cy="1332.500" r="5.800" fill="url(#gLens)" stroke="#2a2a2a" stroke-width="1.200"/><path d="M858.300 1337l4 4" stroke="#2a2a2a" stroke-width="2.400" stroke-linecap="round"/>
<path d="M868 1332h6l-3 3.800z" fill="#2a2a2a"/>
<rect x="888.500" y="1326.500" width="15" height="11.500" rx="1" fill="#e6e6e6" stroke="#2a2a2a" stroke-width="1.100"/><rect x="890.500" y="1328.500" width="11" height="7.500" fill="url(#gMon)" stroke="#3d5f96" stroke-width="0.700"/><path d="M894 1338v2.500h-2v1h8v-1h-2v-2.500" fill="#d0d0d0" stroke="#2a2a2a" stroke-width="0.800"/>
<path d="M906.5 1332h6l-3 3.800z" fill="#2a2a2a"/>
<rect x="919.500" y="1326.500" width="15.500" height="15" fill="#dfe1e6" stroke="#2a2a2a" stroke-width="0.900"/><path d="M922.600 1326.500v15M925.700 1326.500v15M928.800 1326.500v15M931.900 1326.500v15M919.500 1329.500h15.500M919.500 1332.500h15.500M919.500 1335.500h15.500M919.500 1338.500h15.500" stroke="#4a4d57" stroke-width="0.900"/>
<path d="M937.5 1332h6l-3 3.800z" fill="#2a2a2a"/>
<rect x="950" y="1327" width="15" height="14" rx="1" fill="#3a5a9a"/><rect x="951.500" y="1328.500" width="5.200" height="4.700" fill="#a9c4ea"/><rect x="958.300" y="1328.500" width="5.200" height="4.700" fill="#a9c4ea"/><rect x="951.500" y="1334.800" width="5.200" height="4.700" fill="#a9c4ea"/><rect x="958.300" y="1334.800" width="5.200" height="4.700" fill="#a9c4ea"/>
<path d="M968.5 1332h6l-3 3.800z" fill="#2a2a2a"/>
<g fill="#2a2a2a"><rect x="10" y="1368.500" width="2" height="14"/><path d="M23 1368.500v14l-10.500 -7z"/>
<path d="M46.500 1368.500v14l-10.500 -7z"/><rect x="47.500" y="1371.500" width="2" height="8"/>
<path d="M60.500 1367.500v16l12.500 -8z"/>
<rect x="85" y="1371.500" width="2" height="8"/><path d="M88 1368.500v14l10.500 -7z"/>
<path d="M111 1368.500v14l10.500 -7z"/><rect x="121.500" y="1368.500" width="2" height="14"/></g>
<path d="M154.500 1386V1391.800H634.500V1386M178.5 1386V1391.800M202.5 1386V1391.800M226.5 1386V1391.800M250.5 1386V1391.800M274.5 1386V1391.800M298.5 1386V1391.800M322.5 1386V1391.800M346.5 1386V1391.800M370.5 1386V1391.800M394.5 1386V1391.800M418.5 1386V1391.800M442.5 1386V1391.800M466.5 1386V1391.800M490.5 1386V1391.800M514.5 1386V1391.800M538.5 1386V1391.800M562.5 1386V1391.800M586.5 1386V1391.800M610.5 1386V1391.800" fill="none" stroke="#c6c6c6" stroke-width="1.900"/>
<g opacity="1"><rect x="147.5" y="1368.5" width="13" height="13" fill="#84c5f8" stroke="#3a88c9" stroke-width="1"/><path d="M147.5 1376.5c2 -3 3.500 -3.800 5 -2.800s2 2.300 2.800 2.300 1.500 -1.300 2.700 -1.300 1.500 1.500 2.500 2.500v4.800h-13z" fill="#3d8fcb"/><circle cx="156.7" cy="1372" r="1.700" fill="#fbf6c8"/></g>
<g opacity="1"><rect x="171.5" y="1368.5" width="13" height="13" fill="#84c5f8" stroke="#3a88c9" stroke-width="1"/><path d="M171.5 1376.5c2 -3 3.500 -3.800 5 -2.800s2 2.300 2.800 2.300 1.500 -1.300 2.700 -1.300 1.500 1.500 2.500 2.500v4.800h-13z" fill="#3d8fcb"/><circle cx="180.7" cy="1372" r="1.700" fill="#fbf6c8"/></g>
<g opacity="1"><rect x="195" y="1368" width="12.500" height="12.500" fill="none" stroke="#4a4a4a" stroke-width="1" stroke-dasharray="5 2.500"/><rect x="194" y="1367" width="2" height="2" fill="#1f7fe0"/><rect x="206.5" y="1367" width="2" height="2" fill="#1f7fe0"/><rect x="194" y="1379.5" width="2" height="2" fill="#1f7fe0"/><path d="M203.5 1380l4.500 -4.500 2 2 -4.500 4.500z" fill="#f5b335"/><path d="M208 1375.5l1.300 -1.300 2 2 -1.300 1.300z" fill="#ef3b3b"/><path d="M203.5 1380l-1.200 3.200 3.200 -1.200z" fill="#555"/></g>
<g opacity="1"><rect x="219" y="1368" width="12.500" height="12.500" fill="none" stroke="#4a4a4a" stroke-width="1" stroke-dasharray="5 2.500"/><rect x="218" y="1367" width="2" height="2" fill="#1f7fe0"/><rect x="230.5" y="1367" width="2" height="2" fill="#1f7fe0"/><rect x="218" y="1379.5" width="2" height="2" fill="#1f7fe0"/><path d="M227.5 1380l4.500 -4.500 2 2 -4.500 4.500z" fill="#f5b335"/><path d="M232 1375.5l1.300 -1.300 2 2 -1.300 1.300z" fill="#ef3b3b"/><path d="M227.5 1380l-1.200 3.200 3.200 -1.200z" fill="#555"/></g>
<g opacity="1"><rect x="243" y="1368" width="12.500" height="12.500" fill="none" stroke="#4a4a4a" stroke-width="1" stroke-dasharray="5 2.500"/><rect x="242" y="1367" width="2" height="2" fill="#1f7fe0"/><rect x="254.5" y="1367" width="2" height="2" fill="#1f7fe0"/><rect x="242" y="1379.5" width="2" height="2" fill="#1f7fe0"/><path d="M251.5 1380l4.500 -4.500 2 2 -4.500 4.500z" fill="#f5b335"/><path d="M256 1375.5l1.300 -1.300 2 2 -1.300 1.300z" fill="#ef3b3b"/><path d="M251.5 1380l-1.200 3.200 3.200 -1.200z" fill="#555"/></g>
<g opacity="1"><rect x="267" y="1368" width="12.500" height="12.500" fill="none" stroke="#4a4a4a" stroke-width="1" stroke-dasharray="5 2.500"/><rect x="266" y="1367" width="2" height="2" fill="#1f7fe0"/><rect x="278.5" y="1367" width="2" height="2" fill="#1f7fe0"/><rect x="266" y="1379.5" width="2" height="2" fill="#1f7fe0"/><path d="M275.5 1380l4.500 -4.500 2 2 -4.500 4.500z" fill="#f5b335"/><path d="M280 1375.5l1.300 -1.300 2 2 -1.300 1.300z" fill="#ef3b3b"/><path d="M275.5 1380l-1.200 3.200 3.200 -1.200z" fill="#555"/></g>
<g opacity="1"><rect x="291" y="1368" width="12.500" height="12.500" fill="none" stroke="#4a4a4a" stroke-width="1" stroke-dasharray="5 2.500"/><rect x="290" y="1367" width="2" height="2" fill="#1f7fe0"/><rect x="302.5" y="1367" width="2" height="2" fill="#1f7fe0"/><rect x="290" y="1379.5" width="2" height="2" fill="#1f7fe0"/><path d="M299.5 1380l4.500 -4.500 2 2 -4.500 4.500z" fill="#f5b335"/><path d="M304 1375.5l1.300 -1.300 2 2 -1.300 1.300z" fill="#ef3b3b"/><path d="M299.5 1380l-1.200 3.200 3.200 -1.200z" fill="#555"/></g>
<g opacity="1"><path d="M314 1380.5h9.500l3 -2.500v1.800l-3 2.500h-9.500z" fill="#c4c4c4"/><rect x="314" y="1370.5" width="9.500" height="10" fill="#62abe3"/><path d="M314 1370.5l3 -3h9.500l-3 3z" fill="#92c8ef"/><path d="M323.5 1370.5l3 -3v10l-3 3z" fill="#3e86c6"/><path d="M328.7 1369.5v11" stroke="#222" stroke-width="1"/><path d="M327.1 1370.5l1.600 -3.300 1.600 3.300z" fill="#222"/></g>
<g opacity="1"><path d="M338 1380.5h9.500l3 -2.500v1.800l-3 2.500h-9.500z" fill="#c4c4c4"/><rect x="338" y="1370.5" width="9.500" height="10" fill="#62abe3"/><path d="M338 1370.5l3 -3h9.500l-3 3z" fill="#92c8ef"/><path d="M347.5 1370.5l3 -3v10l-3 3z" fill="#3e86c6"/><path d="M352.7 1369.5v11" stroke="#222" stroke-width="1"/><path d="M351.1 1370.5l1.600 -3.300 1.600 3.300z" fill="#222"/></g>
<g opacity="1"><path d="M362 1380.5h9.500l3 -2.500v1.800l-3 2.500h-9.500z" fill="#c4c4c4"/><rect x="362" y="1370.5" width="9.500" height="10" fill="#62abe3"/><path d="M362 1370.5l3 -3h9.500l-3 3z" fill="#92c8ef"/><path d="M371.5 1370.5l3 -3v10l-3 3z" fill="#3e86c6"/><path d="M376.7 1369.5v11" stroke="#222" stroke-width="1"/><path d="M375.1 1370.5l1.600 -3.300 1.600 3.300z" fill="#222"/></g>
<g opacity="1"><path d="M386 1380.5h9.500l3 -2.500v1.800l-3 2.500h-9.500z" fill="#c4c4c4"/><rect x="386" y="1370.5" width="9.500" height="10" fill="#62abe3"/><path d="M386 1370.5l3 -3h9.500l-3 3z" fill="#92c8ef"/><path d="M395.5 1370.5l3 -3v10l-3 3z" fill="#3e86c6"/><path d="M400.7 1369.5v11" stroke="#222" stroke-width="1"/><path d="M399.1 1370.5l1.600 -3.300 1.600 3.300z" fill="#222"/></g>
<g opacity="1"><rect x="411" y="1368" width="12.500" height="12.500" fill="none" stroke="#4a4a4a" stroke-width="1" stroke-dasharray="5 2.500"/><rect x="410" y="1367" width="2" height="2" fill="#1f7fe0"/><rect x="422.5" y="1367" width="2" height="2" fill="#1f7fe0"/><rect x="410" y="1379.5" width="2" height="2" fill="#1f7fe0"/><path d="M419.5 1380l4.500 -4.500 2 2 -4.500 4.500z" fill="#f5b335"/><path d="M424 1375.5l1.300 -1.300 2 2 -1.300 1.300z" fill="#ef3b3b"/><path d="M419.5 1380l-1.200 3.200 3.200 -1.200z" fill="#555"/></g>
<g opacity="1"><path d="M436.5 1380.5l2.500 -8.500 9 -3 -1.500 8.500z" fill="#dc9460"/><path d="M439.3 1378l1.500 -5 5 -2 -1 5z" fill="#b9713f"/><path d="M435 1382c0.500 -5 2 -7 6.500 -7.500M442.5 1375.3c4.500 -0.500 6 -2.500 6.500 -7.500" fill="none" stroke="#4d4d4d" stroke-width="1"/><rect x="434" y="1381" width="2" height="2" fill="#12a535"/><rect x="441" y="1374" width="2" height="2" fill="#12a535"/><rect x="448" y="1367" width="2" height="2" fill="#12a535"/></g>
<g opacity="1"><rect x="459" y="1368" width="12.500" height="12.500" fill="none" stroke="#4a4a4a" stroke-width="1" stroke-dasharray="5 2.500"/><rect x="458" y="1367" width="2" height="2" fill="#1f7fe0"/><rect x="470.5" y="1367" width="2" height="2" fill="#1f7fe0"/><rect x="458" y="1379.5" width="2" height="2" fill="#1f7fe0"/><path d="M467.5 1380l4.500 -4.500 2 2 -4.500 4.500z" fill="#f5b335"/><path d="M472 1375.5l1.300 -1.300 2 2 -1.300 1.300z" fill="#ef3b3b"/><path d="M467.5 1380l-1.200 3.200 3.200 -1.200z" fill="#555"/></g>
<g opacity="1"><path d="M482.5 1371.5l3 -3.500h6.500l5 3.500v7.500l-2.500 2h-12z" fill="#5fa9e2"/><path d="M482.5 1371.5l3 -3.500h6.500l5 3.500h-4.500l-2.500 -2h-3.500l-1.500 2z" fill="#8fc6ef"/><path d="M497 1371.5v7.500l-2.500 2v-7.500z" fill="#3e86c6"/><rect x="487.5" y="1376.5" width="6" height="6" fill="#fff" stroke="#333" stroke-width="1.200"/></g>
<g opacity="1"><rect x="507" y="1368" width="12.500" height="12.500" fill="none" stroke="#4a4a4a" stroke-width="1" stroke-dasharray="5 2.500"/><rect x="506" y="1367" width="2" height="2" fill="#1f7fe0"/><rect x="518.5" y="1367" width="2" height="2" fill="#1f7fe0"/><rect x="506" y="1379.5" width="2" height="2" fill="#1f7fe0"/><path d="M515.5 1380l4.500 -4.500 2 2 -4.500 4.500z" fill="#f5b335"/><path d="M520 1375.5l1.300 -1.300 2 2 -1.300 1.300z" fill="#ef3b3b"/><path d="M515.5 1380l-1.200 3.200 3.200 -1.200z" fill="#555"/></g>
<g opacity="1"><path d="M532.5 1380.5l2.500 -8.500 9 -3 -1.500 8.500z" fill="#dc9460"/><path d="M535.3 1378l1.500 -5 5 -2 -1 5z" fill="#b9713f"/><path d="M531 1382c0.500 -5 2 -7 6.500 -7.500M538.5 1375.3c4.500 -0.500 6 -2.500 6.500 -7.500" fill="none" stroke="#4d4d4d" stroke-width="1"/><rect x="530" y="1381" width="2" height="2" fill="#12a535"/><rect x="537" y="1374" width="2" height="2" fill="#12a535"/><rect x="544" y="1367" width="2" height="2" fill="#12a535"/></g>
<g opacity="1"><rect x="555" y="1368" width="12.500" height="12.500" fill="none" stroke="#4a4a4a" stroke-width="1" stroke-dasharray="5 2.500"/><rect x="554" y="1367" width="2" height="2" fill="#1f7fe0"/><rect x="566.5" y="1367" width="2" height="2" fill="#1f7fe0"/><rect x="554" y="1379.5" width="2" height="2" fill="#1f7fe0"/><path d="M563.5 1380l4.500 -4.500 2 2 -4.500 4.500z" fill="#f5b335"/><path d="M568 1375.5l1.300 -1.300 2 2 -1.300 1.300z" fill="#ef3b3b"/><path d="M563.5 1380l-1.200 3.200 3.200 -1.200z" fill="#555"/></g>
<g opacity="0.28"><path d="M578.5 1371.5l3 -3.500h6.500l5 3.500v7.500l-2.500 2h-12z" fill="#5fa9e2"/><path d="M578.5 1371.5l3 -3.500h6.500l5 3.500h-4.500l-2.500 -2h-3.500l-1.500 2z" fill="#8fc6ef"/><path d="M593 1371.5v7.500l-2.500 2v-7.500z" fill="#3e86c6"/><rect x="583.5" y="1376.5" width="6" height="6" fill="#fff" stroke="#333" stroke-width="1.200"/></g>
<g opacity="0.28"><rect x="603" y="1368" width="12.500" height="12.500" fill="none" stroke="#4a4a4a" stroke-width="1" stroke-dasharray="5 2.500"/><rect x="602" y="1367" width="2" height="2" fill="#1f7fe0"/><rect x="614.5" y="1367" width="2" height="2" fill="#1f7fe0"/><rect x="602" y="1379.5" width="2" height="2" fill="#1f7fe0"/><path d="M611.5 1380l4.500 -4.500 2 2 -4.500 4.500z" fill="#f5b335"/><path d="M616 1375.5l1.300 -1.300 2 2 -1.300 1.300z" fill="#ef3b3b"/><path d="M611.5 1380l-1.200 3.200 3.200 -1.200z" fill="#555"/></g>
<g opacity="0.28"><path d="M626 1380.5h9.500l3 -2.500v1.800l-3 2.500h-9.500z" fill="#c4c4c4"/><rect x="626" y="1370.5" width="9.500" height="10" fill="#62abe3"/><path d="M626 1370.5l3 -3h9.500l-3 3z" fill="#92c8ef"/><path d="M635.5 1370.5l3 -3v10l-3 3z" fill="#3e86c6"/><path d="M640.7 1369.5v11" stroke="#222" stroke-width="1"/><path d="M639.1 1370.5l1.600 -3.300 1.600 3.300z" fill="#222"/></g>
<path d="M568.500 1361h11.500v6l-5.200 4.500h-1.100l-5.200 -4.500z" fill="#555"/><path d="M574.300 1371v21.700" stroke="#555" stroke-width="1.800"/>
<rect x="1696" y="1367.800" width="4" height="4.500" transform="rotate(0 1698 1376)" fill="#8e8e8e"/><rect x="1696" y="1367.800" width="4" height="4.500" transform="rotate(45 1698 1376)" fill="#8e8e8e"/><rect x="1696" y="1367.800" width="4" height="4.500" transform="rotate(90 1698 1376)" fill="#8e8e8e"/><rect x="1696" y="1367.800" width="4" height="4.500" transform="rotate(135 1698 1376)" fill="#8e8e8e"/><rect x="1696" y="1367.800" width="4" height="4.500" transform="rotate(180 1698 1376)" fill="#8e8e8e"/><rect x="1696" y="1367.800" width="4" height="4.500" transform="rotate(225 1698 1376)" fill="#8e8e8e"/><rect x="1696" y="1367.800" width="4" height="4.500" transform="rotate(270 1698 1376)" fill="#8e8e8e"/><rect x="1696" y="1367.800" width="4" height="4.500" transform="rotate(315 1698 1376)" fill="#8e8e8e"/><circle cx="1698" cy="1376" r="6" fill="#8e8e8e"/><circle cx="1698" cy="1376" r="2.600" fill="#f2f2f2"/>
</svg>
</body>
</html>
